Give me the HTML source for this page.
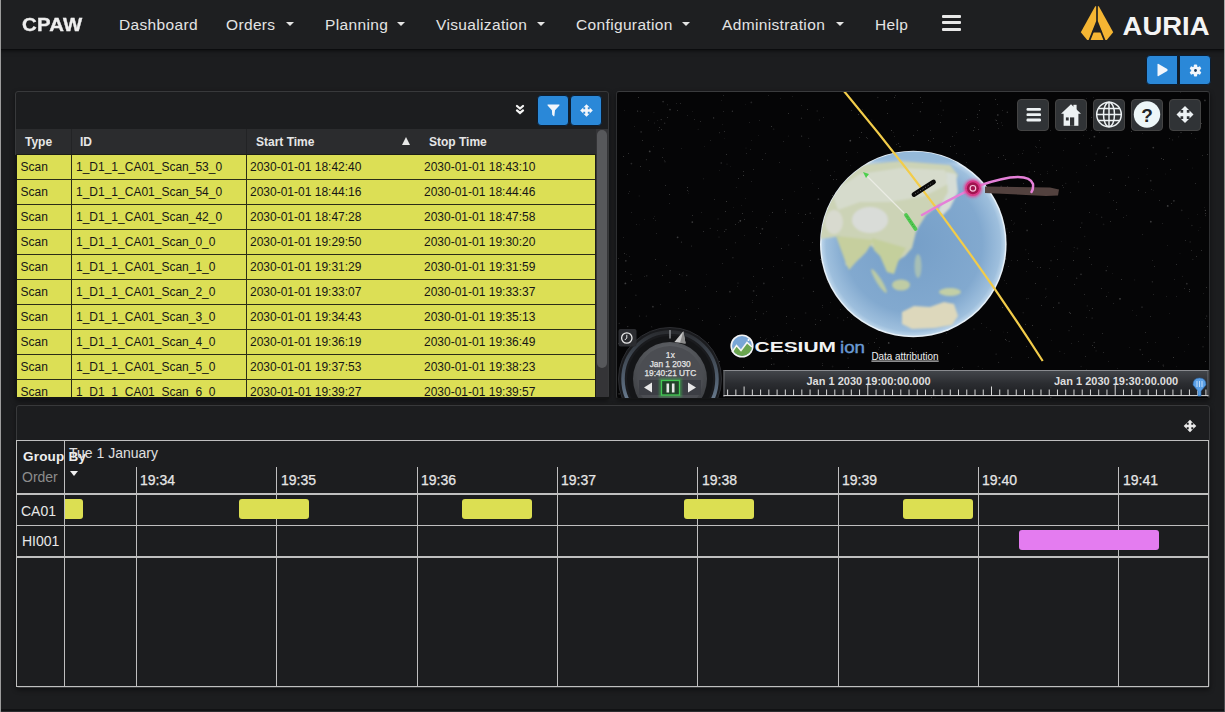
<!DOCTYPE html>
<html><head><meta charset="utf-8">
<style>
*{box-sizing:border-box;margin:0;padding:0}
html,body{width:1225px;height:712px;overflow:hidden;background:#1c1d1f;font-family:"Liberation Sans",sans-serif;}
body{position:relative}
.a{position:absolute}
.nav{left:0;top:0;width:1225px;height:50px;background:#1e1f21;border-bottom:1px solid #0b0c0e;box-shadow:0 1px 4px rgba(0,0,0,.55)}
.ni{position:absolute;top:15.5px;font-size:15.5px;letter-spacing:0.35px;line-height:17px;color:#e4e4e4;white-space:nowrap}
.caret{position:absolute;top:22px;width:0;height:0;border-left:4px solid transparent;border-right:4px solid transparent;border-top:4px solid #e4e4e4}
.bar{position:absolute;left:942px;width:19px;height:3px;background:#e8e8e8;border-radius:1px}
.bbtn{position:absolute;background:#2a88d8;border:1px solid #0b1e33}
.panel{position:absolute;border:1px solid #38393b;border-radius:3px;background:#1c1d1f;box-shadow:0 2px 5px rgba(0,0,0,.45)}
/* table */
.th{position:absolute;top:129px;height:25px;background:#2b2c2e}
.tht{position:absolute;top:135px;font-size:12px;line-height:14px;font-weight:bold;color:#e6e6e6;white-space:nowrap}
.row{position:absolute;left:16px;width:579px;height:25px;background:#dcdf55;border-bottom:1px solid #2c2c18}
.c{position:absolute;top:5px;font-size:12px;line-height:14px;color:#161616;white-space:nowrap}
.vl{position:absolute;top:0;width:1px;height:25px;background:#2c2c18}
/* vis */
.vline{position:absolute;background:#bfbfbf}
.tl{position:absolute;font-size:14px;line-height:16px;color:#e6e6e6;-webkit-text-stroke:0.25px #e6e6e6}
.item{position:absolute;height:20px;background:#dcdf52;border-radius:3px}
</style></head><body>
<div class="a" style="left:0;top:0;width:1px;height:712px;background:#9c9c9c;z-index:9"></div>
<div class="a" style="left:1224px;top:0;width:1px;height:712px;background:linear-gradient(#a8a8a8,#6a6a60 45%,#4a4b4e);z-index:9"></div>
<div class="a" style="left:0;top:709px;width:1225px;height:1.5px;background:#111214;z-index:8"></div>
<div class="a" style="left:0;top:710.5px;width:1225px;height:1.5px;background:#2c2d30;z-index:8"></div>

<!-- NAVBAR -->
<div class="a nav">
  <div class="ni" style="left:22px;top:15px;font-size:18.5px;letter-spacing:0.2px;line-height:20px;font-weight:bold;color:#eeeeee;transform:scaleX(1.10);transform-origin:0 0;-webkit-text-stroke:0.35px #eeeeee">CPAW</div>
  <div class="ni" style="left:119px">Dashboard</div>
  <div class="ni" style="left:226px">Orders</div><div class="caret" style="left:286px"></div>
  <div class="ni" style="left:325px">Planning</div><div class="caret" style="left:397px"></div>
  <div class="ni" style="left:436px">Visualization</div><div class="caret" style="left:537px"></div>
  <div class="ni" style="left:576px">Configuration</div><div class="caret" style="left:682px"></div>
  <div class="ni" style="left:722px">Administration</div><div class="caret" style="left:836px"></div>
  <div class="ni" style="left:875px">Help</div>
  <div class="bar" style="top:15px"></div><div class="bar" style="top:21px"></div><div class="bar" style="top:28px"></div>

  <svg class="a" style="left:1070px;top:0" width="150" height="48" viewBox="0 0 150 48">
    <polygon points="25.2,6.3 28.8,6.3 43.2,32.2 36.8,40 17.2,40 10.8,32.2" fill="#f4b533"/>
    <path d="M27,5 L27,23.5" stroke="#1e1f21" stroke-width="1.7"/>
    <path d="M27,21.5 L19.2,41 M27,21.5 L34.8,41" stroke="#1e1f21" stroke-width="1.9"/>
    <polygon points="27,23 21.8,32.4 32.2,32.4" fill="#1e1f21"/>
    <text x="52.6" y="34.6" font-family="Liberation Sans" font-weight="bold" font-size="25" fill="#f4f4f4" textLength="87" lengthAdjust="spacingAndGlyphs">AURIA</text>
  </svg>
</div>

<!-- top-right buttons -->
<div class="bbtn" style="left:1146px;top:55px;width:32px;height:30px;border-radius:4px 0 0 4px">
  <svg class="a" style="left:9px;top:7px" width="13" height="14" viewBox="0 0 13 14"><path d="M1.5,1.5 Q1.5,0.3 2.6,0.9 L11.2,6.1 Q12.2,7 11.2,7.9 L2.6,13.1 Q1.5,13.7 1.5,12.5 Z" fill="#f2f6fb"/></svg>
</div>
<div class="bbtn" style="left:1179px;top:55px;width:32px;height:30px;border-radius:0 4px 4px 0">
  <svg class="a" style="left:9px;top:8px" width="13" height="13" viewBox="-6.5 -6.5 13 13"><g fill="#f2f6fb"><circle r="4.3"/><g id="t"><rect x="-1.6" y="-6" width="3.2" height="12" rx="0.8"/></g><use href="#t" transform="rotate(60)"/><use href="#t" transform="rotate(120)"/></g><circle r="1.4" fill="#1a3a5a"/></svg>
</div>


<!-- PANEL 1 : table -->
<div class="panel" style="left:15px;top:91px;width:594px;height:308px"></div>
<svg class="a" style="left:515px;top:104px" width="10" height="11" viewBox="0 0 10 11"><path d="M2,2 L5,4.6 L8,2 M2,6.4 L5,9 L8,6.4" fill="none" stroke="#f4f4f4" stroke-width="2.3" stroke-linecap="round" stroke-linejoin="miter"/></svg>
<div class="bbtn" style="left:537px;top:95px;width:32px;height:31px;border-radius:4px">
  <svg class="a" style="left:9px;top:8px" width="13" height="13" viewBox="0 0 13 13"><path d="M0.8,0.6 L12.2,0.6 Q12.8,0.8 12.4,1.4 L8,6.2 L7.4,12 Q7.2,12.6 6.6,12.2 L5.2,10.8 L4.9,6.2 L0.6,1.4 Q0.2,0.8 0.8,0.6 Z" fill="#f2f6fb"/></svg>
</div>
<div class="bbtn" style="left:570px;top:95px;width:32px;height:31px;border-radius:4px">
  <svg class="a" style="left:9px;top:8px" width="13" height="13" viewBox="-6.5 -6.5 13 13"><g fill="#f2f6fb"><path d="M0,-6.3 L3,-3.2 L1.3,-3.2 L1.3,-1.3 L3.2,-1.3 L3.2,-3 L6.3,0 L3.2,3 L3.2,1.3 L1.3,1.3 L1.3,3.2 L3,3.2 L0,6.3 L-3,3.2 L-1.3,3.2 L-1.3,1.3 L-3.2,1.3 L-3.2,3 L-6.3,0 L-3.2,-3 L-3.2,-1.3 L-1.3,-1.3 L-1.3,-3.2 L-3,-3.2 Z"/></g></svg>
</div>
<div class="th" style="left:16px;width:55px"></div>
<div class="th" style="left:72px;width:174px"></div>
<div class="th" style="left:247px;width:349px"></div>
<div class="a" style="left:71px;top:129px;width:1px;height:25px;background:#222325"></div>
<div class="a" style="left:246px;top:129px;width:1px;height:25px;background:#222325"></div>
<div class="tht" style="left:25px">Type</div>
<div class="tht" style="left:80px">ID</div>
<div class="tht" style="left:256px">Start Time</div>
<div class="a" style="left:402px;top:137px;width:0;height:0;border-left:4.5px solid transparent;border-right:4.5px solid transparent;border-bottom:8.5px solid #e8e8e8"></div>
<div class="tht" style="left:429px">Stop Time</div>
<div class="a" style="left:16px;top:154px;width:580px;height:1px;background:#1d1e16"></div>
<div class="a" style="left:17px;top:155px;width:579px;height:242px;overflow:hidden">
<div class="row" style="left:0;top:0px"><div class="vl" style="left:54px"></div><div class="vl" style="left:229px"></div><div class="c" style="left:3.5px">Scan</div><div class="c" style="left:59px">1_D1_1_CA01_Scan_53_0</div><div class="c" style="left:233px">2030-01-01 18:42:40</div><div class="c" style="left:407px">2030-01-01 18:43:10</div></div>
<div class="row" style="left:0;top:25px"><div class="vl" style="left:54px"></div><div class="vl" style="left:229px"></div><div class="c" style="left:3.5px">Scan</div><div class="c" style="left:59px">1_D1_1_CA01_Scan_54_0</div><div class="c" style="left:233px">2030-01-01 18:44:16</div><div class="c" style="left:407px">2030-01-01 18:44:46</div></div>
<div class="row" style="left:0;top:50px"><div class="vl" style="left:54px"></div><div class="vl" style="left:229px"></div><div class="c" style="left:3.5px">Scan</div><div class="c" style="left:59px">1_D1_1_CA01_Scan_42_0</div><div class="c" style="left:233px">2030-01-01 18:47:28</div><div class="c" style="left:407px">2030-01-01 18:47:58</div></div>
<div class="row" style="left:0;top:75px"><div class="vl" style="left:54px"></div><div class="vl" style="left:229px"></div><div class="c" style="left:3.5px">Scan</div><div class="c" style="left:59px">1_D1_1_CA01_Scan_0_0</div><div class="c" style="left:233px">2030-01-01 19:29:50</div><div class="c" style="left:407px">2030-01-01 19:30:20</div></div>
<div class="row" style="left:0;top:100px"><div class="vl" style="left:54px"></div><div class="vl" style="left:229px"></div><div class="c" style="left:3.5px">Scan</div><div class="c" style="left:59px">1_D1_1_CA01_Scan_1_0</div><div class="c" style="left:233px">2030-01-01 19:31:29</div><div class="c" style="left:407px">2030-01-01 19:31:59</div></div>
<div class="row" style="left:0;top:125px"><div class="vl" style="left:54px"></div><div class="vl" style="left:229px"></div><div class="c" style="left:3.5px">Scan</div><div class="c" style="left:59px">1_D1_1_CA01_Scan_2_0</div><div class="c" style="left:233px">2030-01-01 19:33:07</div><div class="c" style="left:407px">2030-01-01 19:33:37</div></div>
<div class="row" style="left:0;top:150px"><div class="vl" style="left:54px"></div><div class="vl" style="left:229px"></div><div class="c" style="left:3.5px">Scan</div><div class="c" style="left:59px">1_D1_1_CA01_Scan_3_0</div><div class="c" style="left:233px">2030-01-01 19:34:43</div><div class="c" style="left:407px">2030-01-01 19:35:13</div></div>
<div class="row" style="left:0;top:175px"><div class="vl" style="left:54px"></div><div class="vl" style="left:229px"></div><div class="c" style="left:3.5px">Scan</div><div class="c" style="left:59px">1_D1_1_CA01_Scan_4_0</div><div class="c" style="left:233px">2030-01-01 19:36:19</div><div class="c" style="left:407px">2030-01-01 19:36:49</div></div>
<div class="row" style="left:0;top:200px"><div class="vl" style="left:54px"></div><div class="vl" style="left:229px"></div><div class="c" style="left:3.5px">Scan</div><div class="c" style="left:59px">1_D1_1_CA01_Scan_5_0</div><div class="c" style="left:233px">2030-01-01 19:37:53</div><div class="c" style="left:407px">2030-01-01 19:38:23</div></div>
<div class="row" style="left:0;top:225px"><div class="vl" style="left:54px"></div><div class="vl" style="left:229px"></div><div class="c" style="left:3.5px">Scan</div><div class="c" style="left:59px">1_D1_1_CA01_Scan_6_0</div><div class="c" style="left:233px">2030-01-01 19:39:27</div><div class="c" style="left:407px">2030-01-01 19:39:57</div></div>
</div>
<div class="a" style="left:15px;top:155px;width:2px;height:244px;background:#141516"></div>
<div class="a" style="left:15px;top:397px;width:594px;height:2px;background:#141516"></div>
<div class="a" style="left:595px;top:155px;width:1px;height:242px;background:#1d1e16"></div>
<div class="a" style="left:596px;top:129px;width:12px;height:268px;background:#343437"></div>
<div class="a" style="left:597px;top:130px;width:10px;height:238px;background:#57585b;border-radius:5px"></div>

<!-- PANEL 2 : cesium -->
<div class="panel" style="left:616px;top:91px;width:594px;height:308px;background:#050506;overflow:hidden;border-color:#3a3b3d #2e2f31 #151617 #2e2f31">
<svg class="a" style="left:0;top:0" width="592" height="306" viewBox="617 92 592 306">
<defs>
 <radialGradient id="oc" cx="0.5" cy="0.5" r="0.5"><stop offset="0" stop-color="#769fc8"/><stop offset="0.75" stop-color="#82a9cf"/><stop offset="0.95" stop-color="#9ebfdd"/><stop offset="1" stop-color="#bcd5ea"/></radialGradient><filter id="bl" x="-10%" y="-10%" width="120%" height="120%"><feGaussianBlur stdDeviation="1.2"/></filter><filter id="gl" x="-50%" y="-50%" width="200%" height="200%"><feGaussianBlur stdDeviation="1.5"/></filter>
 <clipPath id="gc"><circle cx="913.3" cy="244" r="92.5"/></clipPath>
</defs>
<g><rect x="885" y="263" width="1" height="1" fill="#fff" fill-opacity="0.19"/><rect x="893" y="247" width="1" height="1" fill="#fff" fill-opacity="0.14"/><rect x="726" y="249" width="1" height="1" fill="#fff" fill-opacity="0.15"/><rect x="1086" y="121" width="1" height="1" fill="#fff" fill-opacity="0.10"/><rect x="671" y="340" width="1" height="1" fill="#fff" fill-opacity="0.16"/><rect x="642" y="393" width="1" height="1" fill="#fff" fill-opacity="0.20"/><rect x="1004" y="280" width="1" height="1" fill="#fff" fill-opacity="0.08"/><rect x="626" y="254" width="1" height="1" fill="#fff" fill-opacity="0.07"/><rect x="730" y="166" width="1" height="1" fill="#fff" fill-opacity="0.06"/><rect x="892" y="227" width="1" height="1" fill="#fff" fill-opacity="0.18"/><rect x="924" y="288" width="1" height="1" fill="#fff" fill-opacity="0.13"/><rect x="1009" y="232" width="1" height="1" fill="#fff" fill-opacity="0.10"/><rect x="1208" y="397" width="1" height="1" fill="#fff" fill-opacity="0.18"/><rect x="1036" y="188" width="1" height="1" fill="#fff" fill-opacity="0.09"/><rect x="788" y="113" width="1" height="1" fill="#fff" fill-opacity="0.17"/><rect x="854" y="351" width="1" height="1" fill="#fff" fill-opacity="0.11"/><rect x="1184" y="351" width="1" height="1" fill="#fff" fill-opacity="0.06"/><rect x="741" y="371" width="1" height="1" fill="#fff" fill-opacity="0.13"/><rect x="1197" y="214" width="1" height="1" fill="#fff" fill-opacity="0.07"/><rect x="990" y="330" width="1" height="1" fill="#fff" fill-opacity="0.10"/><rect x="669" y="194" width="1" height="1" fill="#fff" fill-opacity="0.19"/><rect x="1066" y="128" width="1" height="1" fill="#fff" fill-opacity="0.09"/><rect x="677" y="110" width="1" height="1" fill="#fff" fill-opacity="0.17"/><rect x="722" y="263" width="1" height="1" fill="#fff" fill-opacity="0.12"/><rect x="730" y="316" width="1" height="1" fill="#fff" fill-opacity="0.08"/><rect x="998" y="128" width="1" height="1" fill="#fff" fill-opacity="0.12"/><rect x="743" y="175" width="1" height="1" fill="#fff" fill-opacity="0.20"/><rect x="1093" y="185" width="1" height="1" fill="#fff" fill-opacity="0.18"/><rect x="742" y="213" width="1" height="1" fill="#fff" fill-opacity="0.18"/><rect x="997" y="123" width="1" height="1" fill="#fff" fill-opacity="0.20"/><rect x="743" y="171" width="1" height="1" fill="#fff" fill-opacity="0.17"/><rect x="812" y="183" width="1" height="1" fill="#fff" fill-opacity="0.07"/><rect x="670" y="270" width="1" height="1" fill="#fff" fill-opacity="0.09"/><rect x="973" y="206" width="1" height="1" fill="#fff" fill-opacity="0.12"/><rect x="1185" y="240" width="1" height="1" fill="#fff" fill-opacity="0.14"/><rect x="1130" y="148" width="1" height="1" fill="#fff" fill-opacity="0.08"/><rect x="1155" y="342" width="1" height="1" fill="#fff" fill-opacity="0.09"/><rect x="729" y="318" width="1" height="1" fill="#fff" fill-opacity="0.19"/><rect x="733" y="383" width="1" height="1" fill="#fff" fill-opacity="0.18"/><rect x="974" y="221" width="1" height="1" fill="#fff" fill-opacity="0.07"/><rect x="640" y="387" width="1" height="1" fill="#fff" fill-opacity="0.09"/><rect x="1034" y="171" width="1" height="1" fill="#fff" fill-opacity="0.18"/><rect x="970" y="182" width="1" height="1" fill="#fff" fill-opacity="0.08"/><rect x="1043" y="113" width="1" height="1" fill="#fff" fill-opacity="0.09"/><rect x="948" y="353" width="1" height="1" fill="#fff" fill-opacity="0.15"/><rect x="783" y="373" width="1" height="1" fill="#fff" fill-opacity="0.09"/><rect x="627" y="174" width="1" height="1" fill="#fff" fill-opacity="0.12"/><rect x="653" y="146" width="1" height="1" fill="#fff" fill-opacity="0.11"/><rect x="956" y="132" width="1" height="1" fill="#fff" fill-opacity="0.11"/><rect x="1144" y="392" width="1" height="1" fill="#fff" fill-opacity="0.15"/><rect x="1026" y="271" width="1" height="1" fill="#fff" fill-opacity="0.08"/><rect x="638" y="97" width="1" height="1" fill="#fff" fill-opacity="0.19"/><rect x="1032" y="387" width="1" height="1" fill="#fff" fill-opacity="0.06"/><rect x="994" y="240" width="1" height="1" fill="#fff" fill-opacity="0.16"/><rect x="806" y="398" width="1" height="1" fill="#fff" fill-opacity="0.07"/><rect x="940" y="318" width="1" height="1" fill="#fff" fill-opacity="0.19"/><rect x="1053" y="307" width="1" height="1" fill="#fff" fill-opacity="0.17"/><rect x="1159" y="200" width="1" height="1" fill="#fff" fill-opacity="0.16"/><rect x="1150" y="359" width="1" height="1" fill="#fff" fill-opacity="0.12"/><rect x="1085" y="356" width="1" height="1" fill="#fff" fill-opacity="0.14"/><rect x="987" y="209" width="1" height="1" fill="#fff" fill-opacity="0.14"/><rect x="977" y="117" width="1" height="1" fill="#fff" fill-opacity="0.15"/><rect x="1205" y="361" width="1" height="1" fill="#fff" fill-opacity="0.16"/><rect x="847" y="317" width="1" height="1" fill="#fff" fill-opacity="0.14"/><rect x="878" y="349" width="1" height="1" fill="#fff" fill-opacity="0.07"/><rect x="1061" y="101" width="1" height="1" fill="#fff" fill-opacity="0.14"/><rect x="902" y="162" width="1" height="1" fill="#fff" fill-opacity="0.16"/><rect x="911" y="280" width="1" height="1" fill="#fff" fill-opacity="0.19"/><rect x="768" y="95" width="1" height="1" fill="#fff" fill-opacity="0.10"/><rect x="1018" y="154" width="1" height="1" fill="#fff" fill-opacity="0.08"/><rect x="1153" y="294" width="1" height="1" fill="#fff" fill-opacity="0.12"/><rect x="1145" y="192" width="1" height="1" fill="#fff" fill-opacity="0.15"/><rect x="735" y="224" width="1" height="1" fill="#fff" fill-opacity="0.17"/><rect x="1158" y="361" width="1" height="1" fill="#fff" fill-opacity="0.11"/><rect x="962" y="189" width="1" height="1" fill="#fff" fill-opacity="0.08"/><rect x="911" y="348" width="1" height="1" fill="#fff" fill-opacity="0.18"/><rect x="1038" y="383" width="1" height="1" fill="#fff" fill-opacity="0.10"/><rect x="717" y="230" width="1" height="1" fill="#fff" fill-opacity="0.10"/><rect x="744" y="219" width="1" height="1" fill="#fff" fill-opacity="0.15"/><rect x="909" y="189" width="1" height="1" fill="#fff" fill-opacity="0.18"/><rect x="1198" y="230" width="1" height="1" fill="#fff" fill-opacity="0.07"/><rect x="636" y="359" width="1" height="1" fill="#fff" fill-opacity="0.07"/><rect x="1037" y="267" width="1" height="1" fill="#fff" fill-opacity="0.10"/><rect x="1086" y="98" width="1" height="1" fill="#fff" fill-opacity="0.08"/><rect x="886" y="100" width="1" height="1" fill="#fff" fill-opacity="0.18"/><rect x="758" y="135" width="1" height="1" fill="#fff" fill-opacity="0.07"/><rect x="989" y="229" width="1" height="1" fill="#fff" fill-opacity="0.15"/><rect x="1005" y="339" width="1" height="1" fill="#fff" fill-opacity="0.19"/><rect x="1022" y="153" width="1" height="1" fill="#fff" fill-opacity="0.13"/><rect x="723" y="95" width="1" height="1" fill="#fff" fill-opacity="0.13"/><rect x="1040" y="147" width="1" height="1" fill="#fff" fill-opacity="0.10"/><rect x="822" y="305" width="1" height="1" fill="#fff" fill-opacity="0.13"/><rect x="981" y="323" width="1" height="1" fill="#fff" fill-opacity="0.12"/><rect x="1086" y="369" width="1" height="1" fill="#fff" fill-opacity="0.07"/><rect x="1169" y="313" width="1" height="1" fill="#fff" fill-opacity="0.08"/><rect x="885" y="283" width="1" height="1" fill="#fff" fill-opacity="0.19"/><rect x="840" y="266" width="1" height="1" fill="#fff" fill-opacity="0.18"/><rect x="1089" y="381" width="1" height="1" fill="#fff" fill-opacity="0.12"/><rect x="1003" y="155" width="1" height="1" fill="#fff" fill-opacity="0.16"/><rect x="1101" y="288" width="1" height="1" fill="#fff" fill-opacity="0.16"/><rect x="743" y="367" width="1" height="1" fill="#fff" fill-opacity="0.20"/><rect x="1196" y="256" width="1" height="1" fill="#fff" fill-opacity="0.17"/><rect x="807" y="370" width="1" height="1" fill="#fff" fill-opacity="0.18"/><rect x="823" y="117" width="1" height="1" fill="#fff" fill-opacity="0.12"/><rect x="943" y="327" width="1" height="1" fill="#fff" fill-opacity="0.13"/><rect x="634" y="340" width="1" height="1" fill="#fff" fill-opacity="0.07"/><rect x="1091" y="145" width="1" height="1" fill="#fff" fill-opacity="0.11"/><rect x="1083" y="135" width="1" height="1" fill="#fff" fill-opacity="0.08"/><rect x="923" y="313" width="1" height="1" fill="#fff" fill-opacity="0.18"/><rect x="1025" y="381" width="1" height="1" fill="#fff" fill-opacity="0.13"/><rect x="1179" y="118" width="1" height="1" fill="#fff" fill-opacity="0.09"/><rect x="929" y="181" width="1" height="1" fill="#fff" fill-opacity="0.16"/><rect x="995" y="252" width="1" height="1" fill="#fff" fill-opacity="0.18"/><rect x="949" y="187" width="1" height="1" fill="#fff" fill-opacity="0.11"/><rect x="1117" y="368" width="1" height="1" fill="#fff" fill-opacity="0.09"/><rect x="1121" y="388" width="1" height="1" fill="#fff" fill-opacity="0.13"/><rect x="956" y="153" width="1" height="1" fill="#fff" fill-opacity="0.14"/><rect x="915" y="277" width="1" height="1" fill="#fff" fill-opacity="0.06"/><rect x="1191" y="250" width="1" height="1" fill="#fff" fill-opacity="0.12"/><rect x="1091" y="264" width="1" height="1" fill="#fff" fill-opacity="0.13"/><rect x="1026" y="112" width="1" height="1" fill="#fff" fill-opacity="0.14"/><rect x="862" y="385" width="1" height="1" fill="#fff" fill-opacity="0.19"/><rect x="776" y="237" width="1" height="1" fill="#fff" fill-opacity="0.08"/><rect x="874" y="342" width="1" height="1" fill="#fff" fill-opacity="0.19"/><rect x="899" y="189" width="1" height="1" fill="#fff" fill-opacity="0.09"/><rect x="983" y="375" width="1" height="1" fill="#fff" fill-opacity="0.08"/><rect x="1078" y="99" width="1" height="1" fill="#fff" fill-opacity="0.09"/><rect x="752" y="302" width="1" height="1" fill="#fff" fill-opacity="0.11"/><rect x="827" y="282" width="1" height="1" fill="#fff" fill-opacity="0.07"/><rect x="1050" y="130" width="1" height="1" fill="#fff" fill-opacity="0.13"/><rect x="765" y="153" width="1" height="1" fill="#fff" fill-opacity="0.13"/><rect x="876" y="207" width="1" height="1" fill="#fff" fill-opacity="0.12"/><rect x="930" y="141" width="1" height="1" fill="#fff" fill-opacity="0.09"/><rect x="991" y="287" width="1" height="1" fill="#fff" fill-opacity="0.13"/><rect x="1121" y="279" width="1" height="1" fill="#fff" fill-opacity="0.18"/><rect x="755" y="319" width="1" height="1" fill="#fff" fill-opacity="0.17"/><rect x="1151" y="189" width="1" height="1" fill="#fff" fill-opacity="0.10"/><rect x="1163" y="159" width="1" height="1" fill="#fff" fill-opacity="0.20"/><rect x="1142" y="133" width="1" height="1" fill="#fff" fill-opacity="0.09"/><rect x="1047" y="171" width="1" height="1" fill="#fff" fill-opacity="0.07"/><rect x="1110" y="221" width="1" height="1" fill="#fff" fill-opacity="0.17"/><rect x="692" y="215" width="1" height="1" fill="#fff" fill-opacity="0.16"/><rect x="628" y="153" width="1" height="1" fill="#fff" fill-opacity="0.16"/><rect x="1157" y="388" width="1" height="1" fill="#fff" fill-opacity="0.08"/><rect x="916" y="324" width="1" height="1" fill="#fff" fill-opacity="0.13"/><rect x="1023" y="150" width="1" height="1" fill="#fff" fill-opacity="0.07"/><rect x="680" y="103" width="1" height="1" fill="#fff" fill-opacity="0.14"/><rect x="922" y="266" width="1" height="1" fill="#fff" fill-opacity="0.08"/><rect x="726" y="154" width="1" height="1" fill="#fff" fill-opacity="0.18"/><rect x="1203" y="376" width="1" height="1" fill="#fff" fill-opacity="0.07"/><rect x="654" y="383" width="1" height="1" fill="#fff" fill-opacity="0.12"/><rect x="1070" y="192" width="1" height="1" fill="#fff" fill-opacity="0.13"/><rect x="922" y="224" width="1" height="1" fill="#fff" fill-opacity="0.14"/><rect x="625" y="307" width="1" height="1" fill="#fff" fill-opacity="0.18"/><rect x="724" y="231" width="1" height="1" fill="#fff" fill-opacity="0.16"/><rect x="857" y="152" width="1" height="1" fill="#fff" fill-opacity="0.08"/><rect x="920" y="97" width="1" height="1" fill="#fff" fill-opacity="0.19"/><rect x="1092" y="308" width="1" height="1" fill="#fff" fill-opacity="0.18"/><rect x="990" y="216" width="1" height="1" fill="#fff" fill-opacity="0.14"/><rect x="916" y="393" width="1" height="1" fill="#fff" fill-opacity="0.17"/><rect x="770" y="371" width="1" height="1" fill="#fff" fill-opacity="0.16"/><rect x="1078" y="341" width="1" height="1" fill="#fff" fill-opacity="0.12"/><rect x="1148" y="361" width="1" height="1" fill="#fff" fill-opacity="0.16"/><rect x="1071" y="326" width="1" height="1" fill="#fff" fill-opacity="0.12"/><rect x="1045" y="114" width="1" height="1" fill="#fff" fill-opacity="0.11"/><rect x="895" y="95" width="1" height="1" fill="#fff" fill-opacity="0.11"/><rect x="995" y="283" width="1" height="1" fill="#fff" fill-opacity="0.09"/><rect x="1176" y="296" width="1" height="1" fill="#fff" fill-opacity="0.11"/><rect x="1008" y="266" width="1" height="1" fill="#fff" fill-opacity="0.13"/><rect x="848" y="398" width="1" height="1" fill="#fff" fill-opacity="0.15"/><rect x="1032" y="325" width="1" height="1" fill="#fff" fill-opacity="0.20"/><rect x="631" y="280" width="1" height="1" fill="#fff" fill-opacity="0.16"/><rect x="769" y="215" width="1" height="1" fill="#fff" fill-opacity="0.07"/><rect x="733" y="207" width="1" height="1" fill="#fff" fill-opacity="0.07"/><rect x="766" y="369" width="1" height="1" fill="#fff" fill-opacity="0.14"/><rect x="918" y="388" width="1" height="1" fill="#fff" fill-opacity="0.14"/><rect x="1206" y="287" width="1" height="1" fill="#fff" fill-opacity="0.17"/><rect x="662" y="275" width="1" height="1" fill="#fff" fill-opacity="0.17"/><rect x="644" y="377" width="1" height="1" fill="#fff" fill-opacity="0.08"/><rect x="896" y="144" width="1" height="1" fill="#fff" fill-opacity="0.13"/><rect x="979" y="110" width="1" height="1" fill="#fff" fill-opacity="0.19"/><rect x="866" y="253" width="1" height="1" fill="#fff" fill-opacity="0.14"/><rect x="833" y="179" width="1" height="1" fill="#fff" fill-opacity="0.15"/><rect x="949" y="179" width="1" height="1" fill="#fff" fill-opacity="0.16"/><rect x="792" y="96" width="1" height="1" fill="#fff" fill-opacity="0.09"/><rect x="642" y="140" width="1" height="1" fill="#fff" fill-opacity="0.17"/><rect x="848" y="367" width="1" height="1" fill="#fff" fill-opacity="0.16"/><rect x="647" y="395" width="1" height="1" fill="#fff" fill-opacity="0.19"/><rect x="661" y="369" width="1" height="1" fill="#fff" fill-opacity="0.12"/><rect x="900" y="390" width="1" height="1" fill="#fff" fill-opacity="0.09"/><rect x="927" y="379" width="1" height="1" fill="#fff" fill-opacity="0.16"/><rect x="894" y="392" width="1" height="1" fill="#fff" fill-opacity="0.17"/><rect x="974" y="127" width="1" height="1" fill="#fff" fill-opacity="0.15"/><rect x="887" y="154" width="1" height="1" fill="#fff" fill-opacity="0.07"/><rect x="930" y="130" width="1" height="1" fill="#fff" fill-opacity="0.12"/><rect x="1012" y="231" width="1" height="1" fill="#fff" fill-opacity="0.10"/><rect x="962" y="220" width="1" height="1" fill="#fff" fill-opacity="0.17"/><rect x="931" y="397" width="1" height="1" fill="#fff" fill-opacity="0.19"/><rect x="1052" y="165" width="1" height="1" fill="#fff" fill-opacity="0.08"/><rect x="1145" y="332" width="1" height="1" fill="#fff" fill-opacity="0.15"/><rect x="830" y="175" width="1" height="1" fill="#fff" fill-opacity="0.16"/><rect x="951" y="273" width="1" height="1" fill="#fff" fill-opacity="0.15"/><rect x="1063" y="150" width="1" height="1" fill="#fff" fill-opacity="0.09"/><rect x="1197" y="372" width="1" height="1" fill="#fff" fill-opacity="0.18"/><rect x="640" y="111" width="1" height="1" fill="#fff" fill-opacity="0.10"/><rect x="869" y="283" width="1" height="1" fill="#fff" fill-opacity="0.07"/><rect x="938" y="114" width="1" height="1" fill="#fff" fill-opacity="0.07"/><rect x="1017" y="260" width="1" height="1" fill="#fff" fill-opacity="0.15"/><rect x="838" y="238" width="1" height="1" fill="#fff" fill-opacity="0.09"/><rect x="820" y="320" width="1" height="1" fill="#fff" fill-opacity="0.18"/><rect x="661" y="129" width="1" height="1" fill="#fff" fill-opacity="0.17"/><rect x="986" y="327" width="1" height="1" fill="#fff" fill-opacity="0.09"/><rect x="868" y="171" width="1" height="1" fill="#fff" fill-opacity="0.17"/><rect x="835" y="292" width="1" height="1" fill="#fff" fill-opacity="0.20"/><rect x="810" y="260" width="1" height="1" fill="#fff" fill-opacity="0.16"/><rect x="1162" y="223" width="1" height="1" fill="#fff" fill-opacity="0.11"/><rect x="674" y="360" width="1" height="1" fill="#fff" fill-opacity="0.07"/><rect x="666" y="265" width="1" height="1" fill="#fff" fill-opacity="0.13"/><rect x="1023" y="183" width="1" height="1" fill="#fff" fill-opacity="0.17"/><rect x="662" y="157" width="1" height="1" fill="#fff" fill-opacity="0.15"/><rect x="665" y="185" width="1" height="1" fill="#fff" fill-opacity="0.16"/><rect x="1028" y="179" width="1" height="1" fill="#fff" fill-opacity="0.08"/><rect x="829" y="314" width="1" height="1" fill="#fff" fill-opacity="0.11"/><rect x="686" y="309" width="1" height="1" fill="#fff" fill-opacity="0.14"/><rect x="1161" y="380" width="1" height="1" fill="#fff" fill-opacity="0.19"/><rect x="876" y="338" width="1" height="1" fill="#fff" fill-opacity="0.10"/><rect x="805" y="214" width="1" height="1" fill="#fff" fill-opacity="0.19"/><rect x="1147" y="168" width="1" height="1" fill="#fff" fill-opacity="0.11"/><rect x="833" y="203" width="1" height="1" fill="#fff" fill-opacity="0.12"/><rect x="846" y="152" width="1" height="1" fill="#fff" fill-opacity="0.14"/><rect x="1089" y="257" width="1" height="1" fill="#fff" fill-opacity="0.18"/><rect x="950" y="146" width="1" height="1" fill="#fff" fill-opacity="0.17"/><rect x="1138" y="178" width="1" height="1" fill="#fff" fill-opacity="0.06"/><rect x="922" y="259" width="1" height="1" fill="#fff" fill-opacity="0.14"/><rect x="1189" y="291" width="1" height="1" fill="#fff" fill-opacity="0.17"/><rect x="655" y="259" width="1" height="1" fill="#fff" fill-opacity="0.17"/><rect x="667" y="117" width="1" height="1" fill="#fff" fill-opacity="0.16"/><rect x="1149" y="118" width="1" height="1" fill="#fff" fill-opacity="0.15"/><rect x="702" y="320" width="1" height="1" fill="#fff" fill-opacity="0.15"/><rect x="762" y="159" width="1" height="1" fill="#fff" fill-opacity="0.17"/><rect x="926" y="326" width="1" height="1" fill="#fff" fill-opacity="0.12"/><rect x="817" y="388" width="1" height="1" fill="#fff" fill-opacity="0.15"/><rect x="909" y="256" width="1" height="1" fill="#fff" fill-opacity="0.16"/><rect x="1036" y="372" width="1" height="1" fill="#fff" fill-opacity="0.12"/><rect x="1106" y="296" width="1" height="1" fill="#fff" fill-opacity="0.18"/><rect x="1094" y="347" width="1" height="1" fill="#fff" fill-opacity="0.18"/><rect x="1184" y="288" width="1" height="1" fill="#fff" fill-opacity="0.13"/><rect x="1037" y="337" width="1" height="1" fill="#fff" fill-opacity="0.12"/><rect x="866" y="137" width="1" height="1" fill="#fff" fill-opacity="0.16"/><rect x="1204" y="207" width="1" height="1" fill="#fff" fill-opacity="0.08"/><rect x="738" y="222" width="1" height="1" fill="#fff" fill-opacity="0.10"/><rect x="1191" y="110" width="1" height="1" fill="#fff" fill-opacity="0.10"/><rect x="685" y="290" width="1" height="1" fill="#fff" fill-opacity="0.17"/><rect x="723" y="111" width="1" height="1" fill="#fff" fill-opacity="0.12"/><rect x="963" y="370" width="1" height="1" fill="#fff" fill-opacity="0.07"/><rect x="681" y="148" width="1" height="1" fill="#fff" fill-opacity="0.09"/><rect x="756" y="311" width="1" height="1" fill="#fff" fill-opacity="0.14"/><rect x="750" y="149" width="1" height="1" fill="#fff" fill-opacity="0.10"/><rect x="719" y="324" width="1" height="1" fill="#fff" fill-opacity="0.10"/><rect x="942" y="342" width="1" height="1" fill="#fff" fill-opacity="0.13"/><rect x="771" y="364" width="1" height="1" fill="#fff" fill-opacity="0.19"/><rect x="820" y="259" width="1" height="1" fill="#fff" fill-opacity="0.19"/><rect x="903" y="160" width="1" height="1" fill="#fff" fill-opacity="0.07"/><rect x="1178" y="337" width="1" height="1" fill="#fff" fill-opacity="0.11"/><rect x="929" y="250" width="1" height="1" fill="#fff" fill-opacity="0.10"/><rect x="1203" y="293" width="1" height="1" fill="#fff" fill-opacity="0.09"/><rect x="623" y="237" width="1" height="1" fill="#fff" fill-opacity="0.11"/><rect x="1089" y="310" width="1" height="1" fill="#fff" fill-opacity="0.14"/><rect x="710" y="140" width="1" height="1" fill="#fff" fill-opacity="0.11"/><rect x="771" y="358" width="1" height="1" fill="#fff" fill-opacity="0.13"/><rect x="994" y="396" width="1" height="1" fill="#fff" fill-opacity="0.10"/><rect x="933" y="138" width="1" height="1" fill="#fff" fill-opacity="0.17"/><rect x="618" y="343" width="1" height="1" fill="#fff" fill-opacity="0.18"/><rect x="1104" y="117" width="1" height="1" fill="#fff" fill-opacity="0.10"/><rect x="1041" y="122" width="1" height="1" fill="#fff" fill-opacity="0.13"/><rect x="894" y="384" width="1" height="1" fill="#fff" fill-opacity="0.14"/><rect x="1125" y="185" width="1" height="1" fill="#fff" fill-opacity="0.17"/><rect x="864" y="373" width="1" height="1" fill="#fff" fill-opacity="0.07"/><rect x="1106" y="156" width="1" height="1" fill="#fff" fill-opacity="0.14"/><rect x="928" y="140" width="1" height="1" fill="#fff" fill-opacity="0.18"/><rect x="801" y="187" width="1" height="1" fill="#fff" fill-opacity="0.07"/><rect x="798" y="235" width="1" height="1" fill="#fff" fill-opacity="0.16"/><rect x="830" y="302" width="1" height="1" fill="#fff" fill-opacity="0.07"/><rect x="850" y="233" width="1" height="1" fill="#fff" fill-opacity="0.20"/><rect x="1108" y="292" width="1" height="1" fill="#fff" fill-opacity="0.06"/><rect x="840" y="309" width="1" height="1" fill="#fff" fill-opacity="0.09"/><rect x="951" y="232" width="1" height="1" fill="#fff" fill-opacity="0.06"/><rect x="1204" y="337" width="1" height="1" fill="#fff" fill-opacity="0.09"/><rect x="982" y="181" width="1" height="1" fill="#fff" fill-opacity="0.11"/><rect x="937" y="183" width="1" height="1" fill="#fff" fill-opacity="0.11"/><rect x="849" y="296" width="1" height="1" fill="#fff" fill-opacity="0.10"/><rect x="735" y="316" width="1" height="1" fill="#fff" fill-opacity="0.11"/><rect x="1176" y="264" width="1" height="1" fill="#fff" fill-opacity="0.16"/><rect x="813" y="345" width="1" height="1" fill="#fff" fill-opacity="0.07"/><rect x="700" y="121" width="1" height="1" fill="#fff" fill-opacity="0.15"/><rect x="1036" y="147" width="1" height="1" fill="#fff" fill-opacity="0.12"/><rect x="1112" y="273" width="1" height="1" fill="#fff" fill-opacity="0.07"/><rect x="751" y="140" width="1" height="1" fill="#fff" fill-opacity="0.08"/><rect x="858" y="114" width="1" height="1" fill="#fff" fill-opacity="0.19"/><rect x="870" y="249" width="1" height="1" fill="#fff" fill-opacity="0.15"/><rect x="1071" y="343" width="1" height="1" fill="#fff" fill-opacity="0.11"/><rect x="813" y="218" width="1" height="1" fill="#fff" fill-opacity="0.06"/><rect x="854" y="306" width="1" height="1" fill="#fff" fill-opacity="0.20"/><rect x="1084" y="294" width="1" height="1" fill="#fff" fill-opacity="0.15"/><rect x="628" y="193" width="1" height="1" fill="#fff" fill-opacity="0.11"/><rect x="1002" y="125" width="1" height="1" fill="#fff" fill-opacity="0.11"/><rect x="919" y="333" width="1" height="1" fill="#fff" fill-opacity="0.18"/><rect x="979" y="140" width="1" height="1" fill="#fff" fill-opacity="0.17"/><rect x="1152" y="260" width="1" height="1" fill="#fff" fill-opacity="0.11"/><rect x="913" y="135" width="1" height="1" fill="#fff" fill-opacity="0.16"/><rect x="1201" y="250" width="1" height="1" fill="#fff" fill-opacity="0.16"/><rect x="1112" y="152" width="1" height="1" fill="#fff" fill-opacity="0.19"/><rect x="988" y="153" width="1" height="1" fill="#fff" fill-opacity="0.07"/><rect x="762" y="268" width="1" height="1" fill="#fff" fill-opacity="0.16"/><rect x="812" y="376" width="1" height="1" fill="#fff" fill-opacity="0.11"/><rect x="891" y="130" width="1" height="1" fill="#fff" fill-opacity="0.20"/><rect x="697" y="369" width="1" height="1" fill="#fff" fill-opacity="0.14"/><rect x="949" y="263" width="1" height="1" fill="#fff" fill-opacity="0.10"/><rect x="1155" y="396" width="1" height="1" fill="#fff" fill-opacity="0.17"/><rect x="973" y="130" width="1" height="1" fill="#fff" fill-opacity="0.18"/><rect x="788" y="366" width="1" height="1" fill="#fff" fill-opacity="0.09"/><rect x="957" y="346" width="1" height="1" fill="#fff" fill-opacity="0.09"/><rect x="941" y="115" width="1" height="1" fill="#fff" fill-opacity="0.06"/><rect x="724" y="394" width="1" height="1" fill="#fff" fill-opacity="0.19"/><rect x="1007" y="186" width="1" height="1" fill="#fff" fill-opacity="0.15"/><rect x="1054" y="209" width="1" height="1" fill="#fff" fill-opacity="0.14"/><rect x="1093" y="97" width="1" height="1" fill="#fff" fill-opacity="0.09"/><rect x="894" y="136" width="1" height="1" fill="#fff" fill-opacity="0.11"/><rect x="954" y="145" width="1" height="1" fill="#fff" fill-opacity="0.13"/><rect x="773" y="266" width="1" height="1" fill="#fff" fill-opacity="0.11"/><rect x="997" y="104" width="1" height="1" fill="#fff" fill-opacity="0.15"/><rect x="703" y="386" width="1" height="1" fill="#fff" fill-opacity="0.14"/><rect x="895" y="218" width="1" height="1" fill="#fff" fill-opacity="0.15"/><rect x="1025" y="324" width="1" height="1" fill="#fff" fill-opacity="0.17"/><rect x="905" y="396" width="1" height="1" fill="#fff" fill-opacity="0.18"/><rect x="1123" y="217" width="1" height="1" fill="#fff" fill-opacity="0.12"/><rect x="952" y="369" width="1" height="1" fill="#fff" fill-opacity="0.13"/><rect x="928" y="224" width="1" height="1" fill="#fff" fill-opacity="0.19"/><rect x="807" y="109" width="1" height="1" fill="#fff" fill-opacity="0.16"/><rect x="1150" y="316" width="1" height="1" fill="#fff" fill-opacity="0.14"/><rect x="1062" y="185" width="1" height="1" fill="#fff" fill-opacity="0.14"/><rect x="658" y="130" width="1" height="1" fill="#fff" fill-opacity="0.12"/><rect x="915" y="213" width="1" height="1" fill="#fff" fill-opacity="0.07"/><rect x="1028" y="253" width="1" height="1" fill="#fff" fill-opacity="0.09"/><rect x="798" y="213" width="1" height="1" fill="#fff" fill-opacity="0.09"/><rect x="658" y="371" width="1" height="1" fill="#fff" fill-opacity="0.20"/><rect x="1011" y="357" width="1" height="1" fill="#fff" fill-opacity="0.12"/><rect x="1094" y="160" width="1" height="1" fill="#fff" fill-opacity="0.16"/><rect x="953" y="368" width="1" height="1" fill="#fff" fill-opacity="0.07"/><rect x="1086" y="130" width="1" height="1" fill="#fff" fill-opacity="0.14"/><rect x="1180" y="92" width="1" height="1" fill="#fff" fill-opacity="0.09"/><rect x="794" y="191" width="1" height="1" fill="#fff" fill-opacity="0.07"/><rect x="1147" y="342" width="1" height="1" fill="#fff" fill-opacity="0.12"/><rect x="828" y="271" width="1" height="1" fill="#fff" fill-opacity="0.07"/><rect x="635" y="367" width="1" height="1" fill="#fff" fill-opacity="0.10"/><rect x="912" y="378" width="1" height="1" fill="#fff" fill-opacity="0.20"/><rect x="897" y="155" width="1" height="1" fill="#fff" fill-opacity="0.10"/><rect x="1163" y="366" width="1" height="1" fill="#fff" fill-opacity="0.09"/><rect x="1113" y="200" width="1" height="1" fill="#fff" fill-opacity="0.13"/><rect x="719" y="361" width="1" height="1" fill="#fff" fill-opacity="0.20"/><rect x="737" y="286" width="1" height="1" fill="#fff" fill-opacity="0.09"/><rect x="1138" y="107" width="1" height="1" fill="#fff" fill-opacity="0.07"/><rect x="1047" y="188" width="1" height="1" fill="#fff" fill-opacity="0.19"/><rect x="1132" y="310" width="1" height="1" fill="#fff" fill-opacity="0.08"/><rect x="1029" y="379" width="1" height="1" fill="#fff" fill-opacity="0.12"/><rect x="664" y="160" width="1" height="1" fill="#fff" fill-opacity="0.10"/><rect x="1038" y="152" width="1" height="1" fill="#fff" fill-opacity="0.09"/><rect x="756" y="295" width="1" height="1" fill="#fff" fill-opacity="0.17"/><rect x="838" y="295" width="1" height="1" fill="#fff" fill-opacity="0.18"/><rect x="966" y="162" width="1" height="1" fill="#fff" fill-opacity="0.10"/><rect x="1166" y="296" width="1" height="1" fill="#fff" fill-opacity="0.10"/><rect x="996" y="120" width="1" height="1" fill="#fff" fill-opacity="0.20"/><rect x="878" y="254" width="1" height="1" fill="#fff" fill-opacity="0.13"/><rect x="644" y="276" width="1" height="1" fill="#fff" fill-opacity="0.10"/><rect x="766" y="338" width="1" height="1" fill="#fff" fill-opacity="0.07"/><rect x="786" y="323" width="1" height="1" fill="#fff" fill-opacity="0.09"/><rect x="782" y="260" width="1" height="1" fill="#fff" fill-opacity="0.09"/><rect x="1148" y="394" width="1" height="1" fill="#fff" fill-opacity="0.06"/><rect x="890" y="322" width="1" height="1" fill="#fff" fill-opacity="0.11"/><rect x="1167" y="245" width="1" height="1" fill="#fff" fill-opacity="0.09"/><rect x="946" y="289" width="1" height="1" fill="#fff" fill-opacity="0.11"/><rect x="1007" y="332" width="1" height="1" fill="#fff" fill-opacity="0.13"/><rect x="916" y="351" width="1" height="1" fill="#fff" fill-opacity="0.16"/><rect x="925" y="383" width="1" height="1" fill="#fff" fill-opacity="0.08"/><rect x="1079" y="143" width="1" height="1" fill="#fff" fill-opacity="0.15"/><rect x="756" y="227" width="1" height="1" fill="#fff" fill-opacity="0.17"/><rect x="1083" y="334" width="1" height="1" fill="#fff" fill-opacity="0.09"/><rect x="907" y="160" width="1" height="1" fill="#fff" fill-opacity="0.14"/><rect x="912" y="103" width="1" height="1" fill="#fff" fill-opacity="0.14"/><rect x="1040" y="267" width="1" height="1" fill="#fff" fill-opacity="0.18"/><rect x="724" y="138" width="1" height="1" fill="#fff" fill-opacity="0.06"/><rect x="911" y="225" width="1" height="1" fill="#fff" fill-opacity="0.12"/><rect x="773" y="336" width="1" height="1" fill="#fff" fill-opacity="0.07"/><rect x="1154" y="266" width="1" height="1" fill="#fff" fill-opacity="0.14"/><rect x="1086" y="165" width="1" height="1" fill="#fff" fill-opacity="0.08"/><rect x="801" y="105" width="1" height="1" fill="#fff" fill-opacity="0.10"/><rect x="985" y="253" width="1" height="1" fill="#fff" fill-opacity="0.10"/><rect x="966" y="119" width="1" height="1" fill="#fff" fill-opacity="0.17"/><rect x="719" y="170" width="1" height="1" fill="#fff" fill-opacity="0.08"/><rect x="1026" y="346" width="1" height="1" fill="#fff" fill-opacity="0.17"/><rect x="653" y="218" width="1" height="1" fill="#fff" fill-opacity="0.11"/><rect x="745" y="389" width="1" height="1" fill="#fff" fill-opacity="0.07"/><rect x="907" y="325" width="1" height="1" fill="#fff" fill-opacity="0.20"/><rect x="703" y="231" width="1" height="1" fill="#fff" fill-opacity="0.16"/><rect x="640" y="166" width="1" height="1" fill="#fff" fill-opacity="0.18"/><rect x="701" y="212" width="1" height="1" fill="#fff" fill-opacity="0.10"/><rect x="868" y="115" width="1" height="1" fill="#fff" fill-opacity="0.06"/><rect x="1207" y="326" width="1" height="1" fill="#fff" fill-opacity="0.16"/><rect x="753" y="169" width="1" height="1" fill="#fff" fill-opacity="0.14"/><rect x="760" y="233" width="1" height="1" fill="#fff" fill-opacity="0.19"/><rect x="832" y="195" width="1" height="1" fill="#fff" fill-opacity="0.20"/><rect x="979" y="104" width="1" height="1" fill="#fff" fill-opacity="0.12"/><rect x="1002" y="110" width="1" height="1" fill="#fff" fill-opacity="0.11"/><rect x="1028" y="357" width="1" height="1" fill="#fff" fill-opacity="0.14"/><rect x="1142" y="234" width="1" height="1" fill="#fff" fill-opacity="0.12"/><rect x="1116" y="209" width="1" height="1" fill="#fff" fill-opacity="0.17"/><rect x="745" y="198" width="1" height="1" fill="#fff" fill-opacity="0.09"/><rect x="942" y="142" width="1" height="1" fill="#fff" fill-opacity="0.09"/><rect x="744" y="235" width="1" height="1" fill="#fff" fill-opacity="0.10"/><rect x="882" y="396" width="1" height="1" fill="#fff" fill-opacity="0.16"/><rect x="1128" y="155" width="1" height="1" fill="#fff" fill-opacity="0.11"/><rect x="660" y="304" width="1" height="1" fill="#fff" fill-opacity="0.11"/><rect x="780" y="98" width="1" height="1" fill="#fff" fill-opacity="0.09"/><rect x="772" y="212" width="1" height="1" fill="#fff" fill-opacity="0.19"/><rect x="1040" y="174" width="1" height="1" fill="#fff" fill-opacity="0.11"/><rect x="708" y="379" width="1" height="1" fill="#fff" fill-opacity="0.11"/><rect x="1070" y="313" width="1" height="1" fill="#fff" fill-opacity="0.19"/><rect x="629" y="191" width="1" height="1" fill="#fff" fill-opacity="0.11"/><rect x="666" y="362" width="1" height="1" fill="#fff" fill-opacity="0.11"/><rect x="1073" y="251" width="1" height="1" fill="#fff" fill-opacity="0.07"/><rect x="850" y="165" width="1" height="1" fill="#fff" fill-opacity="0.07"/><rect x="706" y="274" width="1" height="1" fill="#fff" fill-opacity="0.06"/><rect x="802" y="222" width="1" height="1" fill="#fff" fill-opacity="0.14"/><rect x="698" y="308" width="1" height="1" fill="#fff" fill-opacity="0.10"/><rect x="1046" y="296" width="1" height="1" fill="#fff" fill-opacity="0.08"/><rect x="738" y="178" width="1" height="1" fill="#fff" fill-opacity="0.16"/><rect x="857" y="210" width="1" height="1" fill="#fff" fill-opacity="0.18"/><rect x="751" y="181" width="1" height="1" fill="#fff" fill-opacity="0.11"/><rect x="745" y="104" width="1" height="1" fill="#fff" fill-opacity="0.06"/><rect x="990" y="265" width="1" height="1" fill="#fff" fill-opacity="0.17"/><rect x="1195" y="183" width="1" height="1" fill="#fff" fill-opacity="0.15"/><rect x="1161" y="158" width="1" height="1" fill="#fff" fill-opacity="0.16"/><rect x="1012" y="384" width="1" height="1" fill="#fff" fill-opacity="0.18"/><rect x="756" y="286" width="1" height="1" fill="#fff" fill-opacity="0.07"/><rect x="870" y="212" width="1" height="1" fill="#fff" fill-opacity="0.07"/><rect x="844" y="192" width="1" height="1" fill="#fff" fill-opacity="0.13"/><rect x="783" y="141" width="1" height="1" fill="#fff" fill-opacity="0.12"/><rect x="898" y="143" width="1" height="1" fill="#fff" fill-opacity="0.15"/><rect x="759" y="120" width="1" height="1" fill="#fff" fill-opacity="0.11"/><rect x="867" y="138" width="1" height="1" fill="#fff" fill-opacity="0.14"/><rect x="1032" y="261" width="1" height="1" fill="#fff" fill-opacity="0.16"/><rect x="631" y="212" width="1" height="1" fill="#fff" fill-opacity="0.11"/><rect x="654" y="216" width="1" height="1" fill="#fff" fill-opacity="0.07"/><rect x="910" y="271" width="1" height="1" fill="#fff" fill-opacity="0.13"/><rect x="810" y="170" width="1" height="1" fill="#fff" fill-opacity="0.06"/><rect x="822" y="365" width="1" height="1" fill="#fff" fill-opacity="0.14"/><rect x="772" y="296" width="1" height="1" fill="#fff" fill-opacity="0.09"/><rect x="895" y="280" width="1" height="1" fill="#fff" fill-opacity="0.19"/><rect x="832" y="268" width="1" height="1" fill="#fff" fill-opacity="0.19"/><rect x="1074" y="284" width="1" height="1" fill="#fff" fill-opacity="0.15"/><rect x="860" y="219" width="1" height="1" fill="#fff" fill-opacity="0.10"/><rect x="1108" y="361" width="1" height="1" fill="#fff" fill-opacity="0.11"/><rect x="1155" y="104" width="1" height="1" fill="#fff" fill-opacity="0.08"/><rect x="917" y="186" width="1" height="1" fill="#fff" fill-opacity="0.11"/><rect x="1195" y="138" width="1" height="1" fill="#fff" fill-opacity="0.09"/><rect x="752" y="300" width="1" height="1" fill="#fff" fill-opacity="0.09"/><rect x="618" y="258" width="1" height="1" fill="#fff" fill-opacity="0.12"/><rect x="759" y="243" width="1" height="1" fill="#fff" fill-opacity="0.15"/><rect x="941" y="283" width="1" height="1" fill="#fff" fill-opacity="0.14"/><rect x="1109" y="388" width="1" height="1" fill="#fff" fill-opacity="0.11"/><rect x="822" y="363" width="1" height="1" fill="#fff" fill-opacity="0.10"/><rect x="1041" y="305" width="1" height="1" fill="#fff" fill-opacity="0.16"/><rect x="1188" y="344" width="1" height="1" fill="#fff" fill-opacity="0.08"/><rect x="985" y="242" width="1" height="1" fill="#fff" fill-opacity="0.14"/><rect x="836" y="179" width="1" height="1" fill="#fff" fill-opacity="0.16"/><rect x="933" y="165" width="1" height="1" fill="#fff" fill-opacity="0.09"/><rect x="809" y="146" width="1" height="1" fill="#fff" fill-opacity="0.13"/><rect x="692" y="111" width="1" height="1" fill="#fff" fill-opacity="0.07"/><rect x="678" y="308" width="1" height="1" fill="#fff" fill-opacity="0.08"/><rect x="884" y="328" width="1" height="1" fill="#fff" fill-opacity="0.13"/><rect x="713" y="357" width="1" height="1" fill="#fff" fill-opacity="0.18"/><rect x="649" y="170" width="1" height="1" fill="#fff" fill-opacity="0.13"/><rect x="1089" y="212" width="1" height="1" fill="#fff" fill-opacity="0.16"/><rect x="766" y="311" width="1" height="1" fill="#fff" fill-opacity="0.11"/><rect x="815" y="324" width="1" height="1" fill="#fff" fill-opacity="0.18"/><rect x="1107" y="266" width="1" height="1" fill="#fff" fill-opacity="0.12"/><rect x="1035" y="283" width="1" height="1" fill="#fff" fill-opacity="0.18"/><rect x="1091" y="130" width="1" height="1" fill="#fff" fill-opacity="0.11"/><rect x="1013" y="163" width="1" height="1" fill="#fff" fill-opacity="0.09"/><rect x="625" y="271" width="1" height="1" fill="#fff" fill-opacity="0.19"/><rect x="1191" y="133" width="1" height="1" fill="#fff" fill-opacity="0.16"/><rect x="865" y="285" width="1" height="1" fill="#fff" fill-opacity="0.12"/><rect x="1170" y="395" width="1" height="1" fill="#fff" fill-opacity="0.07"/><rect x="1039" y="128" width="1" height="1" fill="#fff" fill-opacity="0.07"/><rect x="786" y="316" width="1" height="1" fill="#fff" fill-opacity="0.20"/><rect x="688" y="193" width="1" height="1" fill="#fff" fill-opacity="0.06"/><rect x="938" y="240" width="1" height="1" fill="#fff" fill-opacity="0.11"/><rect x="800" y="337" width="1" height="1" fill="#fff" fill-opacity="0.18"/><rect x="785" y="212" width="1" height="1" fill="#fff" fill-opacity="0.15"/><rect x="1070" y="392" width="1" height="1" fill="#fff" fill-opacity="0.11"/><rect x="1028" y="259" width="1" height="1" fill="#fff" fill-opacity="0.17"/><rect x="704" y="146" width="1" height="1" fill="#fff" fill-opacity="0.07"/><rect x="1170" y="169" width="1" height="1" fill="#fff" fill-opacity="0.13"/><rect x="688" y="191" width="1" height="1" fill="#fff" fill-opacity="0.06"/><rect x="952" y="136" width="1" height="1" fill="#fff" fill-opacity="0.15"/><rect x="779" y="162" width="1" height="1" fill="#fff" fill-opacity="0.13"/><rect x="834" y="171" width="1" height="1" fill="#fff" fill-opacity="0.07"/><rect x="655" y="365" width="1" height="1" fill="#fff" fill-opacity="0.10"/><rect x="663" y="148" width="1" height="1" fill="#fff" fill-opacity="0.13"/><rect x="1207" y="154" width="1" height="1" fill="#fff" fill-opacity="0.18"/><rect x="904" y="219" width="1" height="1" fill="#fff" fill-opacity="0.17"/><rect x="851" y="110" width="1" height="1" fill="#fff" fill-opacity="0.14"/><rect x="1006" y="283" width="1" height="1" fill="#fff" fill-opacity="0.10"/><rect x="1173" y="357" width="1" height="1" fill="#fff" fill-opacity="0.20"/><rect x="879" y="347" width="1" height="1" fill="#fff" fill-opacity="0.16"/><rect x="721" y="100" width="1" height="1" fill="#fff" fill-opacity="0.08"/><rect x="687" y="115" width="1" height="1" fill="#fff" fill-opacity="0.11"/><rect x="1063" y="187" width="1" height="1" fill="#fff" fill-opacity="0.13"/><rect x="623" y="156" width="1" height="1" fill="#fff" fill-opacity="0.19"/><rect x="624" y="253" width="1" height="1" fill="#fff" fill-opacity="0.17"/><rect x="1086" y="317" width="1" height="1" fill="#fff" fill-opacity="0.12"/><rect x="1092" y="345" width="1" height="1" fill="#fff" fill-opacity="0.17"/><rect x="1201" y="123" width="1" height="1" fill="#fff" fill-opacity="0.19"/><rect x="855" y="308" width="1" height="1" fill="#fff" fill-opacity="0.10"/><rect x="1156" y="99" width="1" height="1" fill="#fff" fill-opacity="0.14"/><rect x="752" y="211" width="1" height="1" fill="#fff" fill-opacity="0.11"/><rect x="1006" y="340" width="1" height="1" fill="#fff" fill-opacity="0.11"/><rect x="995" y="200" width="1" height="1" fill="#fff" fill-opacity="0.10"/><rect x="1153" y="190" width="1" height="1" fill="#fff" fill-opacity="0.07"/><rect x="815" y="319" width="1" height="1" fill="#fff" fill-opacity="0.09"/><rect x="1057" y="259" width="1" height="1" fill="#fff" fill-opacity="0.16"/><rect x="722" y="124" width="1" height="1" fill="#fff" fill-opacity="0.08"/><rect x="824" y="224" width="1" height="1" fill="#fff" fill-opacity="0.06"/><rect x="915" y="215" width="1" height="1" fill="#fff" fill-opacity="0.11"/><rect x="935" y="383" width="1" height="1" fill="#fff" fill-opacity="0.09"/><rect x="1138" y="190" width="1" height="1" fill="#fff" fill-opacity="0.17"/><rect x="681" y="394" width="1" height="1" fill="#fff" fill-opacity="0.12"/><rect x="1187" y="159" width="1" height="1" fill="#fff" fill-opacity="0.12"/><rect x="1035" y="146" width="1" height="1" fill="#fff" fill-opacity="0.10"/><rect x="1018" y="382" width="1" height="1" fill="#fff" fill-opacity="0.11"/><rect x="726" y="201" width="1" height="1" fill="#fff" fill-opacity="0.20"/><rect x="705" y="286" width="1" height="1" fill="#fff" fill-opacity="0.11"/><rect x="998" y="157" width="1" height="1" fill="#fff" fill-opacity="0.15"/><rect x="1142" y="354" width="1" height="1" fill="#fff" fill-opacity="0.15"/><rect x="916" y="266" width="1" height="1" fill="#fff" fill-opacity="0.08"/><rect x="1113" y="303" width="1" height="1" fill="#fff" fill-opacity="0.12"/><rect x="1011" y="220" width="1" height="1" fill="#fff" fill-opacity="0.11"/><rect x="753" y="276" width="1" height="1" fill="#fff" fill-opacity="0.14"/><rect x="922" y="102" width="1" height="1" fill="#fff" fill-opacity="0.15"/><rect x="882" y="274" width="1" height="1" fill="#fff" fill-opacity="0.14"/><rect x="1169" y="138" width="1" height="1" fill="#fff" fill-opacity="0.13"/><rect x="1205" y="318" width="1" height="1" fill="#fff" fill-opacity="0.10"/><rect x="1053" y="395" width="1" height="1" fill="#fff" fill-opacity="0.12"/><rect x="1131" y="131" width="1" height="1" fill="#fff" fill-opacity="0.20"/><rect x="908" y="164" width="1" height="1" fill="#fff" fill-opacity="0.18"/><rect x="1001" y="379" width="1" height="1" fill="#fff" fill-opacity="0.18"/><rect x="1089" y="249" width="1" height="1" fill="#fff" fill-opacity="0.20"/><rect x="655" y="358" width="1" height="1" fill="#fff" fill-opacity="0.16"/><rect x="765" y="339" width="1" height="1" fill="#fff" fill-opacity="0.12"/><rect x="935" y="357" width="1" height="1" fill="#fff" fill-opacity="0.09"/><rect x="783" y="289" width="1" height="1" fill="#fff" fill-opacity="0.07"/><rect x="946" y="333" width="1" height="1" fill="#fff" fill-opacity="0.13"/><rect x="760" y="337" width="1" height="1" fill="#fff" fill-opacity="0.18"/><rect x="1073" y="260" width="1" height="1" fill="#fff" fill-opacity="0.19"/><rect x="1089" y="138" width="1" height="1" fill="#fff" fill-opacity="0.11"/><rect x="676" y="103" width="1" height="1" fill="#fff" fill-opacity="0.11"/><rect x="1129" y="347" width="1" height="1" fill="#fff" fill-opacity="0.08"/><rect x="725" y="211" width="1" height="1" fill="#fff" fill-opacity="0.18"/><rect x="982" y="368" width="1" height="1" fill="#fff" fill-opacity="0.07"/><rect x="1202" y="155" width="1" height="1" fill="#fff" fill-opacity="0.15"/><rect x="1136" y="315" width="1" height="1" fill="#fff" fill-opacity="0.09"/><rect x="1013" y="224" width="1" height="1" fill="#fff" fill-opacity="0.06"/><rect x="818" y="188" width="1" height="1" fill="#fff" fill-opacity="0.15"/><rect x="782" y="277" width="1" height="1" fill="#fff" fill-opacity="0.16"/><rect x="724" y="131" width="1" height="1" fill="#fff" fill-opacity="0.16"/><rect x="893" y="132" width="1" height="1" fill="#fff" fill-opacity="0.08"/><rect x="1174" y="279" width="1" height="1" fill="#fff" fill-opacity="0.11"/><rect x="733" y="396" width="1" height="1" fill="#fff" fill-opacity="0.16"/><rect x="1053" y="202" width="1" height="1" fill="#fff" fill-opacity="0.10"/><rect x="859" y="137" width="1" height="1" fill="#fff" fill-opacity="0.15"/><rect x="868" y="343" width="1" height="1" fill="#fff" fill-opacity="0.12"/><rect x="887" y="247" width="1" height="1" fill="#fff" fill-opacity="0.19"/><rect x="822" y="307" width="1" height="1" fill="#fff" fill-opacity="0.09"/><rect x="960" y="179" width="1" height="1" fill="#fff" fill-opacity="0.18"/><rect x="787" y="353" width="1" height="1" fill="#fff" fill-opacity="0.15"/><rect x="886" y="378" width="1" height="1" fill="#fff" fill-opacity="0.11"/><rect x="1057" y="276" width="1" height="1" fill="#fff" fill-opacity="0.12"/><rect x="655" y="220" width="1" height="1" fill="#fff" fill-opacity="0.10"/><rect x="878" y="384" width="1" height="1" fill="#fff" fill-opacity="0.10"/><rect x="1028" y="298" width="1" height="1" fill="#fff" fill-opacity="0.09"/><rect x="861" y="132" width="1" height="1" fill="#fff" fill-opacity="0.19"/><rect x="766" y="221" width="1" height="1" fill="#fff" fill-opacity="0.11"/><rect x="1103" y="352" width="1" height="1" fill="#fff" fill-opacity="0.14"/><rect x="940" y="122" width="1" height="1" fill="#fff" fill-opacity="0.19"/><rect x="669" y="203" width="1" height="1" fill="#fff" fill-opacity="0.11"/><rect x="1045" y="297" width="1" height="1" fill="#fff" fill-opacity="0.11"/><rect x="1149" y="383" width="1" height="1" fill="#fff" fill-opacity="0.06"/><rect x="992" y="236" width="1" height="1" fill="#fff" fill-opacity="0.11"/><rect x="892" y="189" width="1" height="1" fill="#fff" fill-opacity="0.15"/><rect x="975" y="389" width="1" height="1" fill="#fff" fill-opacity="0.20"/><rect x="1205" y="213" width="1" height="1" fill="#fff" fill-opacity="0.18"/><rect x="1002" y="307" width="1" height="1" fill="#fff" fill-opacity="0.20"/><rect x="656" y="233" width="1" height="1" fill="#fff" fill-opacity="0.12"/><rect x="1005" y="159" width="1" height="1" fill="#fff" fill-opacity="0.20"/><rect x="741" y="205" width="1" height="1" fill="#fff" fill-opacity="0.08"/><rect x="851" y="319" width="1" height="1" fill="#fff" fill-opacity="0.07"/><rect x="716" y="291" width="1" height="1" fill="#fff" fill-opacity="0.15"/><rect x="1056" y="170" width="1" height="1" fill="#fff" fill-opacity="0.17"/><rect x="1050" y="329" width="1" height="1" fill="#fff" fill-opacity="0.08"/><rect x="894" y="97" width="1" height="1" fill="#fff" fill-opacity="0.18"/><rect x="1176" y="366" width="1" height="1" fill="#fff" fill-opacity="0.06"/><rect x="825" y="256" width="1" height="1" fill="#fff" fill-opacity="0.13"/><rect x="683" y="334" width="1" height="1" fill="#fff" fill-opacity="0.10"/><rect x="917" y="130" width="1" height="1" fill="#fff" fill-opacity="0.14"/><rect x="694" y="119" width="1" height="1" fill="#fff" fill-opacity="0.13"/><rect x="791" y="330" width="1" height="1" fill="#fff" fill-opacity="0.09"/><rect x="862" y="109" width="1" height="1" fill="#fff" fill-opacity="0.09"/><rect x="884" y="263" width="1" height="1" fill="#fff" fill-opacity="0.12"/><rect x="1121" y="124" width="1" height="1" fill="#fff" fill-opacity="0.18"/><rect x="709" y="389" width="1" height="1" fill="#fff" fill-opacity="0.13"/><rect x="858" y="279" width="1" height="1" fill="#fff" fill-opacity="0.18"/><rect x="1188" y="218" width="1" height="1" fill="#fff" fill-opacity="0.06"/><rect x="708" y="342" width="1" height="1" fill="#fff" fill-opacity="0.16"/><rect x="1039" y="140" width="1" height="1" fill="#fff" fill-opacity="0.13"/><rect x="634" y="126" width="1" height="1" fill="#fff" fill-opacity="0.10"/><rect x="1189" y="289" width="1" height="1" fill="#fff" fill-opacity="0.18"/><rect x="644" y="219" width="1" height="1" fill="#fff" fill-opacity="0.07"/><rect x="771" y="126" width="1" height="1" fill="#fff" fill-opacity="0.19"/><rect x="812" y="242" width="1" height="1" fill="#fff" fill-opacity="0.15"/><rect x="1142" y="382" width="1" height="1" fill="#fff" fill-opacity="0.14"/><rect x="914" y="369" width="1" height="1" fill="#fff" fill-opacity="0.12"/><rect x="794" y="318" width="1" height="1" fill="#fff" fill-opacity="0.10"/><rect x="835" y="223" width="1" height="1" fill="#fff" fill-opacity="0.13"/><rect x="829" y="224" width="1" height="1" fill="#fff" fill-opacity="0.12"/><rect x="646" y="348" width="1" height="1" fill="#fff" fill-opacity="0.07"/><rect x="930" y="260" width="1" height="1" fill="#fff" fill-opacity="0.12"/><rect x="749" y="122" width="1" height="1" fill="#fff" fill-opacity="0.11"/><rect x="803" y="240" width="1" height="1" fill="#fff" fill-opacity="0.09"/><rect x="1061" y="241" width="1" height="1" fill="#fff" fill-opacity="0.06"/><rect x="858" y="388" width="1" height="1" fill="#fff" fill-opacity="0.06"/><rect x="968" y="386" width="1" height="1" fill="#fff" fill-opacity="0.11"/><rect x="971" y="205" width="1" height="1" fill="#fff" fill-opacity="0.10"/><rect x="978" y="272" width="1" height="1" fill="#fff" fill-opacity="0.10"/><rect x="912" y="250" width="1" height="1" fill="#fff" fill-opacity="0.17"/><rect x="648" y="120" width="1" height="1" fill="#fff" fill-opacity="0.10"/><rect x="777" y="335" width="1" height="1" fill="#fff" fill-opacity="0.12"/><rect x="1126" y="215" width="1" height="1" fill="#fff" fill-opacity="0.10"/><rect x="1019" y="118" width="1" height="1" fill="#fff" fill-opacity="0.20"/><rect x="1109" y="192" width="1" height="1" fill="#fff" fill-opacity="0.10"/><rect x="1102" y="333" width="1" height="1" fill="#fff" fill-opacity="0.15"/><rect x="651" y="326" width="1" height="1" fill="#fff" fill-opacity="0.07"/><rect x="987" y="261" width="1" height="1" fill="#fff" fill-opacity="0.19"/><rect x="995" y="99" width="1" height="1" fill="#fff" fill-opacity="0.19"/><rect x="1063" y="269" width="1" height="1" fill="#fff" fill-opacity="0.06"/><rect x="1053" y="220" width="1" height="1" fill="#fff" fill-opacity="0.16"/><rect x="1199" y="373" width="1" height="1" fill="#fff" fill-opacity="0.07"/><rect x="1080" y="227" width="1" height="1" fill="#fff" fill-opacity="0.17"/><rect x="841" y="229" width="1" height="1" fill="#fff" fill-opacity="0.12"/><rect x="687" y="190" width="1" height="1" fill="#fff" fill-opacity="0.16"/><rect x="659" y="127" width="1" height="1" fill="#fff" fill-opacity="0.18"/><rect x="1011" y="260" width="1" height="1" fill="#fff" fill-opacity="0.08"/><rect x="687" y="187" width="1" height="1" fill="#fff" fill-opacity="0.19"/><rect x="949" y="374" width="1" height="1" fill="#fff" fill-opacity="0.09"/><rect x="863" y="256" width="1" height="1" fill="#fff" fill-opacity="0.18"/><rect x="690" y="359" width="1" height="1" fill="#fff" fill-opacity="0.13"/><rect x="636" y="224" width="1" height="1" fill="#fff" fill-opacity="0.11"/><rect x="1016" y="376" width="1" height="1" fill="#fff" fill-opacity="0.13"/><rect x="1025" y="211" width="1" height="1" fill="#fff" fill-opacity="0.17"/><rect x="679" y="319" width="1" height="1" fill="#fff" fill-opacity="0.08"/><rect x="964" y="154" width="1" height="1" fill="#fff" fill-opacity="0.11"/><rect x="714" y="199" width="1" height="1" fill="#fff" fill-opacity="0.14"/><rect x="925" y="211" width="1" height="1" fill="#fff" fill-opacity="0.14"/><rect x="1116" y="202" width="1" height="1" fill="#fff" fill-opacity="0.14"/><rect x="901" y="392" width="1" height="1" fill="#fff" fill-opacity="0.11"/><rect x="1030" y="163" width="1" height="1" fill="#fff" fill-opacity="0.10"/><rect x="1049" y="268" width="1" height="1" fill="#fff" fill-opacity="0.10"/><rect x="655" y="344" width="1" height="1" fill="#fff" fill-opacity="0.11"/><rect x="1041" y="224" width="1" height="1" fill="#fff" fill-opacity="0.15"/><rect x="948" y="391" width="1" height="1" fill="#fff" fill-opacity="0.19"/><rect x="887" y="241" width="1" height="1" fill="#fff" fill-opacity="0.09"/><rect x="1063" y="123" width="1" height="1" fill="#fff" fill-opacity="0.10"/><rect x="1119" y="103" width="1" height="1" fill="#fff" fill-opacity="0.16"/><rect x="953" y="261" width="1" height="1" fill="#fff" fill-opacity="0.11"/><rect x="707" y="383" width="1" height="1" fill="#fff" fill-opacity="0.17"/><rect x="1094" y="122" width="1" height="1" fill="#fff" fill-opacity="0.17"/><rect x="746" y="153" width="1" height="1" fill="#fff" fill-opacity="0.13"/><rect x="978" y="129" width="1" height="1" fill="#fff" fill-opacity="0.17"/><rect x="962" y="367" width="1" height="1" fill="#fff" fill-opacity="0.19"/><rect x="1025" y="203" width="1" height="1" fill="#fff" fill-opacity="0.19"/><rect x="1042" y="181" width="1" height="1" fill="#fff" fill-opacity="0.18"/><rect x="1047" y="173" width="1" height="1" fill="#fff" fill-opacity="0.09"/><rect x="629" y="256" width="1" height="1" fill="#fff" fill-opacity="0.10"/><rect x="790" y="169" width="1" height="1" fill="#fff" fill-opacity="0.08"/><rect x="904" y="175" width="1" height="1" fill="#fff" fill-opacity="0.10"/><rect x="781" y="248" width="1" height="1" fill="#fff" fill-opacity="0.18"/><rect x="712" y="355" width="1" height="1" fill="#fff" fill-opacity="0.18"/><rect x="978" y="258" width="1" height="1" fill="#fff" fill-opacity="0.16"/><rect x="933" y="294" width="1" height="1" fill="#fff" fill-opacity="0.19"/><rect x="1076" y="172" width="1" height="1" fill="#fff" fill-opacity="0.07"/><rect x="1171" y="203" width="1" height="1" fill="#fff" fill-opacity="0.17"/><circle cx="808.7" cy="138.2" r="0.5" fill="#fff" fill-opacity="0.18"/><circle cx="1103.2" cy="120.8" r="0.6" fill="#fff" fill-opacity="0.17"/><circle cx="639.2" cy="224.7" r="0.5" fill="#fff" fill-opacity="0.08"/><circle cx="943.2" cy="110.1" r="0.6" fill="#fff" fill-opacity="0.17"/><circle cx="990.3" cy="270.4" r="0.9" fill="#fff" fill-opacity="0.08"/><circle cx="646.4" cy="159.7" r="0.6" fill="#fff" fill-opacity="0.17"/><circle cx="788.4" cy="136.1" r="0.7" fill="#fff" fill-opacity="0.09"/><circle cx="948.7" cy="300.7" r="0.6" fill="#fff" fill-opacity="0.09"/><circle cx="837.5" cy="259.6" r="0.5" fill="#fff" fill-opacity="0.08"/><circle cx="983.5" cy="243.9" r="0.7" fill="#fff" fill-opacity="0.16"/><circle cx="892.6" cy="374.6" r="0.6" fill="#fff" fill-opacity="0.13"/><circle cx="1087.3" cy="305.9" r="0.7" fill="#fff" fill-opacity="0.11"/><circle cx="927.9" cy="359.8" r="0.7" fill="#fff" fill-opacity="0.20"/><circle cx="977.5" cy="114.4" r="0.6" fill="#fff" fill-opacity="0.16"/><circle cx="1065.2" cy="138.5" r="0.5" fill="#fff" fill-opacity="0.16"/><circle cx="1186.5" cy="115.8" r="0.7" fill="#fff" fill-opacity="0.17"/><circle cx="818.4" cy="199.2" r="0.9" fill="#fff" fill-opacity="0.16"/><circle cx="657.7" cy="120.6" r="0.5" fill="#fff" fill-opacity="0.12"/><circle cx="652.9" cy="306.7" r="0.9" fill="#fff" fill-opacity="0.18"/><circle cx="785.5" cy="210.1" r="0.5" fill="#fff" fill-opacity="0.19"/><circle cx="1173.9" cy="200.8" r="0.9" fill="#fff" fill-opacity="0.18"/><circle cx="651.9" cy="327.1" r="0.6" fill="#fff" fill-opacity="0.09"/><circle cx="852.6" cy="372.5" r="0.6" fill="#fff" fill-opacity="0.16"/><circle cx="882.9" cy="260.1" r="0.9" fill="#fff" fill-opacity="0.23"/><circle cx="1128.5" cy="177.2" r="0.7" fill="#fff" fill-opacity="0.14"/><circle cx="1021.2" cy="208.4" r="0.5" fill="#fff" fill-opacity="0.11"/><circle cx="721.3" cy="163.0" r="0.9" fill="#fff" fill-opacity="0.11"/><circle cx="1109.0" cy="147.8" r="0.6" fill="#fff" fill-opacity="0.12"/><circle cx="865.0" cy="205.0" r="0.6" fill="#fff" fill-opacity="0.17"/><circle cx="1025.8" cy="249.7" r="0.5" fill="#fff" fill-opacity="0.18"/><circle cx="887.3" cy="358.5" r="0.9" fill="#fff" fill-opacity="0.24"/><circle cx="852.7" cy="212.6" r="0.9" fill="#fff" fill-opacity="0.15"/><circle cx="653.9" cy="112.6" r="0.6" fill="#fff" fill-opacity="0.10"/><circle cx="682.1" cy="275.8" r="0.6" fill="#fff" fill-opacity="0.09"/><circle cx="934.7" cy="382.4" r="0.5" fill="#fff" fill-opacity="0.18"/><circle cx="1134.6" cy="279.9" r="0.7" fill="#fff" fill-opacity="0.09"/><circle cx="1182.6" cy="276.3" r="0.5" fill="#fff" fill-opacity="0.15"/><circle cx="1119.6" cy="395.9" r="0.9" fill="#fff" fill-opacity="0.15"/><circle cx="801.6" cy="136.1" r="0.7" fill="#fff" fill-opacity="0.20"/><circle cx="900.3" cy="303.8" r="0.6" fill="#fff" fill-opacity="0.16"/><circle cx="1180.0" cy="253.6" r="0.5" fill="#fff" fill-opacity="0.09"/><circle cx="1065.8" cy="183.2" r="0.5" fill="#fff" fill-opacity="0.18"/><circle cx="1029.1" cy="171.9" r="0.6" fill="#fff" fill-opacity="0.14"/><circle cx="827.6" cy="160.2" r="0.7" fill="#fff" fill-opacity="0.17"/><circle cx="993.8" cy="279.6" r="0.6" fill="#fff" fill-opacity="0.21"/><circle cx="1094.2" cy="342.4" r="0.6" fill="#fff" fill-opacity="0.20"/><circle cx="735.4" cy="242.8" r="0.5" fill="#fff" fill-opacity="0.20"/><circle cx="1084.7" cy="236.5" r="0.7" fill="#fff" fill-opacity="0.10"/><circle cx="881.8" cy="378.7" r="0.7" fill="#fff" fill-opacity="0.25"/><circle cx="664.7" cy="123.3" r="0.7" fill="#fff" fill-opacity="0.15"/><circle cx="738.0" cy="283.0" r="0.5" fill="#fff" fill-opacity="0.23"/><circle cx="900.8" cy="291.8" r="0.5" fill="#fff" fill-opacity="0.21"/><circle cx="1111.1" cy="128.7" r="0.6" fill="#fff" fill-opacity="0.14"/><circle cx="900.0" cy="146.6" r="0.7" fill="#fff" fill-opacity="0.21"/><circle cx="668.4" cy="381.5" r="0.9" fill="#fff" fill-opacity="0.20"/><circle cx="854.6" cy="381.7" r="0.6" fill="#fff" fill-opacity="0.20"/><circle cx="1204.9" cy="100.4" r="0.9" fill="#fff" fill-opacity="0.18"/><circle cx="1094.4" cy="136.7" r="0.9" fill="#fff" fill-opacity="0.22"/><circle cx="1006.1" cy="199.2" r="0.6" fill="#fff" fill-opacity="0.17"/><circle cx="629.7" cy="336.6" r="0.5" fill="#fff" fill-opacity="0.20"/><circle cx="928.7" cy="377.7" r="0.6" fill="#fff" fill-opacity="0.14"/><circle cx="1106.1" cy="156.6" r="0.7" fill="#fff" fill-opacity="0.11"/><circle cx="913.7" cy="325.7" r="0.9" fill="#fff" fill-opacity="0.13"/><circle cx="1110.8" cy="110.6" r="0.9" fill="#fff" fill-opacity="0.20"/><circle cx="1009.2" cy="341.4" r="0.6" fill="#fff" fill-opacity="0.16"/><circle cx="931.8" cy="252.2" r="0.9" fill="#fff" fill-opacity="0.07"/><circle cx="1076.7" cy="278.2" r="0.6" fill="#fff" fill-opacity="0.21"/><circle cx="719.0" cy="236.9" r="0.5" fill="#fff" fill-opacity="0.20"/><circle cx="810.0" cy="250.6" r="0.5" fill="#fff" fill-opacity="0.17"/><circle cx="1139.9" cy="109.4" r="0.5" fill="#fff" fill-opacity="0.10"/><circle cx="1074.2" cy="247.4" r="0.5" fill="#fff" fill-opacity="0.17"/><circle cx="879.4" cy="279.4" r="0.6" fill="#fff" fill-opacity="0.16"/><circle cx="1027.1" cy="230.4" r="0.9" fill="#fff" fill-opacity="0.16"/><circle cx="917.6" cy="167.8" r="0.7" fill="#fff" fill-opacity="0.16"/><circle cx="1163.3" cy="365.2" r="0.9" fill="#fff" fill-opacity="0.10"/><circle cx="698.2" cy="129.2" r="0.5" fill="#fff" fill-opacity="0.15"/><circle cx="1014.3" cy="223.1" r="0.7" fill="#fff" fill-opacity="0.11"/><circle cx="1081.1" cy="366.5" r="0.7" fill="#fff" fill-opacity="0.09"/><circle cx="701.6" cy="362.1" r="0.6" fill="#fff" fill-opacity="0.24"/><circle cx="1059.0" cy="120.8" r="0.6" fill="#fff" fill-opacity="0.23"/><circle cx="1203.0" cy="346.7" r="0.9" fill="#fff" fill-opacity="0.09"/><circle cx="1205.5" cy="215.6" r="0.7" fill="#fff" fill-opacity="0.14"/><circle cx="805.6" cy="313.0" r="0.9" fill="#fff" fill-opacity="0.07"/><circle cx="877.8" cy="97.5" r="0.7" fill="#fff" fill-opacity="0.13"/><circle cx="920.3" cy="111.7" r="0.6" fill="#fff" fill-opacity="0.24"/><circle cx="1192.2" cy="124.1" r="0.5" fill="#fff" fill-opacity="0.12"/><circle cx="1153.3" cy="147.6" r="0.9" fill="#fff" fill-opacity="0.20"/><circle cx="1120.0" cy="298.8" r="0.9" fill="#fff" fill-opacity="0.24"/><circle cx="705.4" cy="373.3" r="0.7" fill="#fff" fill-opacity="0.17"/><circle cx="670.0" cy="109.6" r="0.9" fill="#fff" fill-opacity="0.19"/><circle cx="1147.0" cy="174.3" r="0.5" fill="#fff" fill-opacity="0.07"/><circle cx="1091.6" cy="117.6" r="0.5" fill="#fff" fill-opacity="0.22"/><circle cx="773.6" cy="129.2" r="0.9" fill="#fff" fill-opacity="0.07"/><circle cx="1165.6" cy="174.0" r="0.6" fill="#fff" fill-opacity="0.09"/><circle cx="1172.4" cy="388.6" r="0.6" fill="#fff" fill-opacity="0.11"/><circle cx="736.4" cy="187.5" r="0.6" fill="#fff" fill-opacity="0.12"/><circle cx="788.7" cy="245.0" r="0.7" fill="#fff" fill-opacity="0.10"/><circle cx="1092.8" cy="396.3" r="0.5" fill="#fff" fill-opacity="0.07"/><circle cx="1051.0" cy="260.6" r="0.9" fill="#fff" fill-opacity="0.10"/><circle cx="762.4" cy="228.8" r="0.9" fill="#fff" fill-opacity="0.18"/><circle cx="1005.7" cy="259.0" r="0.7" fill="#fff" fill-opacity="0.23"/><circle cx="1024.1" cy="392.6" r="0.6" fill="#fff" fill-opacity="0.13"/><circle cx="856.6" cy="198.4" r="0.6" fill="#fff" fill-opacity="0.08"/><circle cx="625.4" cy="283.4" r="0.9" fill="#fff" fill-opacity="0.23"/><circle cx="713.6" cy="117.9" r="0.7" fill="#fff" fill-opacity="0.22"/><circle cx="971.5" cy="304.0" r="0.6" fill="#fff" fill-opacity="0.08"/><circle cx="710.3" cy="228.4" r="0.7" fill="#fff" fill-opacity="0.12"/><circle cx="1192.8" cy="259.4" r="0.7" fill="#fff" fill-opacity="0.11"/><circle cx="746.0" cy="148.0" r="0.5" fill="#fff" fill-opacity="0.13"/><circle cx="898.0" cy="245.8" r="0.5" fill="#fff" fill-opacity="0.10"/><circle cx="670.8" cy="342.0" r="0.5" fill="#fff" fill-opacity="0.09"/><circle cx="850.2" cy="183.7" r="0.5" fill="#fff" fill-opacity="0.18"/><circle cx="963.7" cy="253.9" r="0.9" fill="#fff" fill-opacity="0.20"/><circle cx="1069.5" cy="312.5" r="0.7" fill="#fff" fill-opacity="0.16"/><circle cx="1045.7" cy="288.8" r="0.9" fill="#fff" fill-opacity="0.08"/><circle cx="1051.4" cy="340.5" r="0.5" fill="#fff" fill-opacity="0.09"/><circle cx="1106.2" cy="270.7" r="0.6" fill="#fff" fill-opacity="0.23"/><circle cx="667.4" cy="104.8" r="0.5" fill="#fff" fill-opacity="0.18"/><circle cx="840.0" cy="230.1" r="0.5" fill="#fff" fill-opacity="0.08"/><circle cx="987.7" cy="300.3" r="0.5" fill="#fff" fill-opacity="0.16"/><circle cx="887.5" cy="113.5" r="0.5" fill="#fff" fill-opacity="0.23"/><circle cx="1007.3" cy="112.2" r="0.7" fill="#fff" fill-opacity="0.20"/><circle cx="1096.1" cy="350.9" r="0.6" fill="#fff" fill-opacity="0.11"/><circle cx="753.6" cy="290.9" r="0.9" fill="#fff" fill-opacity="0.15"/><circle cx="662.4" cy="370.6" r="0.5" fill="#fff" fill-opacity="0.12"/><circle cx="982.2" cy="288.7" r="0.6" fill="#fff" fill-opacity="0.08"/><circle cx="813.4" cy="291.4" r="0.6" fill="#fff" fill-opacity="0.19"/><circle cx="624.4" cy="110.6" r="0.5" fill="#fff" fill-opacity="0.12"/><circle cx="1026.8" cy="298.8" r="0.7" fill="#fff" fill-opacity="0.12"/><circle cx="892.1" cy="234.7" r="0.6" fill="#fff" fill-opacity="0.09"/><circle cx="801.5" cy="118.3" r="0.7" fill="#fff" fill-opacity="0.15"/><circle cx="888.7" cy="342.9" r="0.9" fill="#fff" fill-opacity="0.24"/><circle cx="1205.4" cy="210.4" r="0.6" fill="#fff" fill-opacity="0.23"/><circle cx="661.2" cy="119.6" r="0.7" fill="#fff" fill-opacity="0.20"/><circle cx="1181.0" cy="132.6" r="0.7" fill="#fff" fill-opacity="0.22"/><circle cx="1142.0" cy="307.2" r="0.9" fill="#fff" fill-opacity="0.11"/><circle cx="850.3" cy="140.7" r="0.9" fill="#fff" fill-opacity="0.24"/><circle cx="857.0" cy="314.5" r="0.9" fill="#fff" fill-opacity="0.14"/><circle cx="804.1" cy="349.1" r="0.7" fill="#fff" fill-opacity="0.07"/><circle cx="1113.8" cy="128.7" r="0.5" fill="#fff" fill-opacity="0.23"/><circle cx="1150.7" cy="180.7" r="0.9" fill="#fff" fill-opacity="0.14"/><circle cx="848.0" cy="358.2" r="0.9" fill="#fff" fill-opacity="0.08"/><circle cx="1064.3" cy="353.4" r="0.5" fill="#fff" fill-opacity="0.12"/><circle cx="1111.1" cy="179.4" r="0.6" fill="#fff" fill-opacity="0.23"/><circle cx="1191.9" cy="225.5" r="0.7" fill="#fff" fill-opacity="0.13"/><circle cx="1081.8" cy="222.9" r="0.9" fill="#fff" fill-opacity="0.07"/><circle cx="1157.7" cy="379.9" r="0.5" fill="#fff" fill-opacity="0.17"/><circle cx="646.3" cy="316.1" r="0.6" fill="#fff" fill-opacity="0.15"/><circle cx="998.5" cy="179.6" r="0.6" fill="#fff" fill-opacity="0.08"/><circle cx="718.1" cy="218.9" r="0.7" fill="#fff" fill-opacity="0.12"/><circle cx="1054.5" cy="390.7" r="0.6" fill="#fff" fill-opacity="0.11"/><circle cx="795.1" cy="262.5" r="0.6" fill="#fff" fill-opacity="0.14"/><circle cx="997.8" cy="115.0" r="0.9" fill="#fff" fill-opacity="0.16"/><circle cx="942.8" cy="230.6" r="0.9" fill="#fff" fill-opacity="0.13"/><circle cx="870.0" cy="259.6" r="0.6" fill="#fff" fill-opacity="0.11"/><circle cx="819.4" cy="119.9" r="0.7" fill="#fff" fill-opacity="0.11"/><circle cx="1096.1" cy="153.9" r="0.9" fill="#fff" fill-opacity="0.07"/><circle cx="843.6" cy="320.2" r="0.7" fill="#fff" fill-opacity="0.10"/><circle cx="817.2" cy="111.0" r="0.7" fill="#fff" fill-opacity="0.12"/><circle cx="691.5" cy="246.0" r="0.6" fill="#fff" fill-opacity="0.18"/><circle cx="671.8" cy="366.4" r="0.9" fill="#fff" fill-opacity="0.14"/><circle cx="872.6" cy="187.5" r="0.5" fill="#fff" fill-opacity="0.22"/><circle cx="692.3" cy="222.1" r="0.9" fill="#fff" fill-opacity="0.21"/><circle cx="1190.2" cy="241.9" r="0.9" fill="#fff" fill-opacity="0.08"/><circle cx="1192.6" cy="168.0" r="0.6" fill="#fff" fill-opacity="0.09"/><circle cx="707.0" cy="389.4" r="0.9" fill="#fff" fill-opacity="0.09"/><circle cx="667.3" cy="329.7" r="0.6" fill="#fff" fill-opacity="0.07"/><circle cx="754.7" cy="373.5" r="0.7" fill="#fff" fill-opacity="0.18"/><circle cx="1186.8" cy="283.7" r="0.9" fill="#fff" fill-opacity="0.16"/><circle cx="1030.6" cy="126.3" r="0.6" fill="#fff" fill-opacity="0.08"/><circle cx="846.7" cy="160.4" r="0.5" fill="#fff" fill-opacity="0.18"/><circle cx="935.2" cy="396.9" r="0.7" fill="#fff" fill-opacity="0.12"/><circle cx="998.6" cy="362.4" r="0.6" fill="#fff" fill-opacity="0.15"/><circle cx="940.8" cy="101.0" r="0.7" fill="#fff" fill-opacity="0.14"/><circle cx="649.7" cy="151.4" r="0.9" fill="#fff" fill-opacity="0.23"/><circle cx="665.0" cy="161.7" r="0.7" fill="#fff" fill-opacity="0.14"/><circle cx="751.3" cy="102.4" r="0.9" fill="#fff" fill-opacity="0.13"/><circle cx="831.5" cy="213.3" r="0.7" fill="#fff" fill-opacity="0.07"/><circle cx="1054.6" cy="246.5" r="0.6" fill="#fff" fill-opacity="0.10"/><circle cx="801.5" cy="342.9" r="0.6" fill="#fff" fill-opacity="0.11"/><circle cx="773.9" cy="364.1" r="0.9" fill="#fff" fill-opacity="0.09"/><circle cx="978.2" cy="366.3" r="0.5" fill="#fff" fill-opacity="0.15"/><circle cx="1178.7" cy="136.8" r="0.6" fill="#fff" fill-opacity="0.14"/><circle cx="631.0" cy="274.4" r="0.5" fill="#fff" fill-opacity="0.14"/><circle cx="726.0" cy="229.6" r="0.7" fill="#fff" fill-opacity="0.19"/><circle cx="1050.8" cy="397.2" r="0.7" fill="#fff" fill-opacity="0.23"/><circle cx="729.9" cy="291.7" r="0.9" fill="#fff" fill-opacity="0.16"/><circle cx="635.9" cy="295.3" r="0.7" fill="#fff" fill-opacity="0.14"/><circle cx="1200.1" cy="227.4" r="0.5" fill="#fff" fill-opacity="0.09"/><circle cx="782.6" cy="199.5" r="0.5" fill="#fff" fill-opacity="0.24"/><circle cx="949.2" cy="324.2" r="0.7" fill="#fff" fill-opacity="0.14"/><circle cx="1103.6" cy="224.3" r="0.9" fill="#fff" fill-opacity="0.08"/><circle cx="732.9" cy="257.7" r="0.7" fill="#fff" fill-opacity="0.15"/><circle cx="832.6" cy="366.5" r="0.9" fill="#fff" fill-opacity="0.07"/><circle cx="763.8" cy="283.4" r="0.9" fill="#fff" fill-opacity="0.14"/><circle cx="637.6" cy="111.1" r="0.7" fill="#fff" fill-opacity="0.23"/><circle cx="732.4" cy="111.2" r="0.7" fill="#fff" fill-opacity="0.18"/><circle cx="778.2" cy="385.1" r="0.7" fill="#fff" fill-opacity="0.18"/><circle cx="1058.9" cy="303.0" r="0.7" fill="#fff" fill-opacity="0.23"/><circle cx="619.2" cy="323.2" r="0.5" fill="#fff" fill-opacity="0.23"/><circle cx="631.4" cy="163.6" r="0.9" fill="#fff" fill-opacity="0.15"/><circle cx="1181.7" cy="210.3" r="0.9" fill="#fff" fill-opacity="0.11"/><circle cx="1099.4" cy="132.6" r="0.5" fill="#fff" fill-opacity="0.16"/><circle cx="1092.1" cy="318.0" r="0.6" fill="#fff" fill-opacity="0.22"/><circle cx="976.5" cy="192.3" r="0.7" fill="#fff" fill-opacity="0.13"/><circle cx="1081.0" cy="274.3" r="0.9" fill="#fff" fill-opacity="0.16"/><circle cx="1062.7" cy="167.7" r="0.5" fill="#fff" fill-opacity="0.08"/><circle cx="902.2" cy="258.7" r="0.9" fill="#fff" fill-opacity="0.09"/><circle cx="1140.0" cy="394.3" r="0.5" fill="#fff" fill-opacity="0.12"/><circle cx="740.3" cy="220.8" r="0.9" fill="#fff" fill-opacity="0.25"/><circle cx="719.5" cy="132.7" r="0.6" fill="#fff" fill-opacity="0.15"/><circle cx="1059.8" cy="351.2" r="0.5" fill="#fff" fill-opacity="0.19"/><circle cx="1078.6" cy="181.9" r="0.7" fill="#fff" fill-opacity="0.12"/><circle cx="837.8" cy="317.8" r="0.6" fill="#fff" fill-opacity="0.10"/><circle cx="727.0" cy="164.1" r="0.6" fill="#fff" fill-opacity="0.12"/><circle cx="810.2" cy="213.2" r="0.6" fill="#fff" fill-opacity="0.25"/><circle cx="1001.6" cy="122.8" r="0.5" fill="#fff" fill-opacity="0.15"/><circle cx="677.6" cy="237.3" r="0.9" fill="#fff" fill-opacity="0.22"/><circle cx="1158.3" cy="104.4" r="0.5" fill="#fff" fill-opacity="0.12"/><circle cx="646.8" cy="275.8" r="0.6" fill="#fff" fill-opacity="0.22"/><circle cx="1167.7" cy="205.9" r="0.9" fill="#fff" fill-opacity="0.23"/><circle cx="974.0" cy="329.1" r="0.5" fill="#fff" fill-opacity="0.19"/><circle cx="679.6" cy="274.4" r="0.6" fill="#fff" fill-opacity="0.18"/><circle cx="639.2" cy="196.0" r="0.7" fill="#fff" fill-opacity="0.08"/><circle cx="639.6" cy="316.1" r="0.5" fill="#fff" fill-opacity="0.23"/><circle cx="1101.7" cy="217.2" r="0.7" fill="#fff" fill-opacity="0.14"/><circle cx="663.1" cy="101.6" r="0.9" fill="#fff" fill-opacity="0.16"/><circle cx="654.5" cy="123.0" r="0.6" fill="#fff" fill-opacity="0.14"/><circle cx="995.4" cy="119.9" r="0.7" fill="#fff" fill-opacity="0.10"/><circle cx="859.6" cy="178.7" r="0.5" fill="#fff" fill-opacity="0.12"/><circle cx="801.9" cy="265.4" r="0.9" fill="#fff" fill-opacity="0.13"/><circle cx="627.8" cy="326.6" r="0.6" fill="#fff" fill-opacity="0.21"/><circle cx="848.3" cy="215.9" r="0.9" fill="#fff" fill-opacity="0.24"/><circle cx="1150.8" cy="221.7" r="0.9" fill="#fff" fill-opacity="0.22"/><circle cx="959.1" cy="203.6" r="0.6" fill="#fff" fill-opacity="0.21"/><circle cx="625.8" cy="260.8" r="0.9" fill="#fff" fill-opacity="0.18"/><circle cx="669.7" cy="282.4" r="0.6" fill="#fff" fill-opacity="0.14"/><circle cx="703.4" cy="178.7" r="0.5" fill="#fff" fill-opacity="0.16"/><circle cx="681.4" cy="242.1" r="0.6" fill="#fff" fill-opacity="0.21"/><circle cx="795.6" cy="348.2" r="0.9" fill="#fff" fill-opacity="0.08"/><circle cx="803.2" cy="277.9" r="0.5" fill="#fff" fill-opacity="0.18"/><circle cx="1152.3" cy="281.8" r="0.6" fill="#fff" fill-opacity="0.22"/><circle cx="996.1" cy="354.1" r="0.6" fill="#fff" fill-opacity="0.18"/><circle cx="1107.9" cy="148.0" r="0.9" fill="#fff" fill-opacity="0.11"/><circle cx="1172.6" cy="139.9" r="0.6" fill="#fff" fill-opacity="0.13"/><circle cx="763.3" cy="313.8" r="0.5" fill="#fff" fill-opacity="0.23"/><circle cx="1140.2" cy="349.8" r="0.7" fill="#fff" fill-opacity="0.19"/><circle cx="686.7" cy="275.5" r="0.7" fill="#fff" fill-opacity="0.17"/><circle cx="1001.2" cy="186.3" r="0.9" fill="#fff" fill-opacity="0.11"/><circle cx="1007.0" cy="228.7" r="0.5" fill="#fff" fill-opacity="0.15"/><circle cx="619.1" cy="393.8" r="0.9" fill="#fff" fill-opacity="0.15"/><circle cx="1069.0" cy="330.7" r="0.6" fill="#fff" fill-opacity="0.15"/><circle cx="1096.8" cy="214.5" r="0.7" fill="#fff" fill-opacity="0.08"/><circle cx="871.9" cy="120.1" r="0.5" fill="#fff" fill-opacity="0.15"/><circle cx="641.1" cy="131.9" r="0.7" fill="#fff" fill-opacity="0.23"/><circle cx="1077.4" cy="248.5" r="0.9" fill="#fff" fill-opacity="0.08"/><circle cx="1003.4" cy="332.0" r="0.5" fill="#fff" fill-opacity="0.07"/><circle cx="1206.7" cy="316.0" r="0.6" fill="#fff" fill-opacity="0.22"/><circle cx="694.9" cy="363.0" r="0.6" fill="#fff" fill-opacity="0.12"/><circle cx="1023.2" cy="312.7" r="0.7" fill="#fff" fill-opacity="0.11"/></g>
<circle cx="913.3" cy="244" r="93.3" fill="#e6f0f8"/>
<circle cx="913.3" cy="244" r="91.8" fill="url(#oc)"/>
<g clip-path="url(#gc)" filter="url(#bl)">
 <path d="M810,165 L860,165 L900,161 L950,165 L958,175 L952,190 L945,200 L935,208 L926,215 L918,228 L916,232 L912,248 L905,256 L895,262 L892,268 L888,268 L884,258 L876,250 L870,245 L866,252 L860,258 L852,262 L846,266 L844,255 L840,236 L828,238 L810,240 Z" fill="#ccd3b6"/>
 <path d="M810,150 L1000,150 L1000,163 L950,163 L900,159 L860,163 L820,170 L810,178 Z" fill="#94b9d9"/>
 <path d="M832,192 L860,174 L900,168 L945,170 L948,184 L925,196 L890,202 L860,202 L838,210 Z" fill="#d6dbcc"/>
 <ellipse cx="870" cy="220" rx="18" ry="13" fill="#d9dcd8"/>
 <ellipse cx="834" cy="222" rx="9" ry="12" fill="#d8dacf"/>
 <path d="M836,236 L874,240 L866,252 L856,262 L849,270 L844,258 Z" fill="#c6cf9e"/>
 <path d="M872,238 L906,248 L898,262 L894,274 L887,272 L880,256 L874,250 Z" fill="#c4cf9c"/>
 <path d="M946,172 L956,174 L958,192 L950,208 L942,216 L938,210 L948,192 Z" fill="#d6ddd6"/>
 <path d="M902,312 L914,306 L930,307 L944,302 L954,304 L958,316 L952,325 L935,328 L912,329 L902,324 Z" fill="#ddd8bc"/>
 <ellipse cx="879" cy="281" rx="14" ry="2.6" fill="#bccba4" transform="rotate(58 879 281)"/>
 <ellipse cx="901" cy="285" rx="9" ry="5.5" fill="#bfcca4"/>
 <ellipse cx="950" cy="292" rx="11" ry="4" fill="#c2cfa6"/>
 <ellipse cx="918" cy="266" rx="3.5" ry="12" fill="#a6bfb6"/>
</g>
<path d="M843.9,91 Q956.3,226 1042.7,361" fill="none" stroke="#f2cc4a" stroke-width="2.2"/>
<!-- shadow ribbon -->
<polygon points="985,186.5 1050,187.5 1059,189.5 1058,195.5 1046,196 985,193" fill="#53423f"/>
<!-- pink curve -->
<path d="M922,215 Q948,200 972.9,188.3 Q990,181 1010,177.5 Q1030,175 1033,184 Q1033.5,189 1031.5,192" fill="none" stroke="#e580d8" stroke-width="2.5" stroke-linecap="round"/>
<circle cx="972.9" cy="188.3" r="9" fill="#e04898" filter="url(#gl)"/><circle cx="972.9" cy="188.3" r="7.8" fill="#d83a8a"/>
<circle cx="972.9" cy="188.3" r="6" fill="#a1134f"/>
<circle cx="972.9" cy="188.3" r="2.8" fill="none" stroke="#f6c6dc" stroke-width="1.2"/>
<!-- satellite -->
<path d="M914,194.5 L933.5,182" stroke="#0a0a0a" stroke-width="4.8" stroke-linecap="round"/><path d="M915,194 L933,182.6" stroke="#9a9a9a" stroke-width="0.7" stroke-dasharray="1 2"/>
<!-- green line -->
<path d="M866,175 L904,213" stroke="#f0f0ea" stroke-opacity="0.8" stroke-width="1.2"/>
<path d="M863,172 L869,174 L866,178 Z" fill="#4cd04c"/>
<path d="M906,215 L915.5,229" stroke="#52c852" stroke-width="3.8" stroke-linecap="round"/><path d="M907,216.5 L914.5,227.5" stroke="#2f9a2f" stroke-width="1" stroke-dasharray="1 2"/>
<!-- cesium ion logo -->
<circle cx="742" cy="346" r="11.6" fill="#f4f4f4"/>
<circle cx="742" cy="346" r="10" fill="#79a6d6"/>
<path d="M731,352 L736,345 L741,350 L747,342 L753,347 L753,358 L731,358 Z" fill="#6aa44e" clip-path="url(#lc)"/>
<clipPath id="lc"><circle cx="742" cy="346" r="10"/></clipPath>
<path d="M732,352 L736.5,345.5 L741,350.5 L747,342.5 L752,347" fill="none" stroke="#f4f4f4" stroke-width="1.6"/>
<circle cx="748.5" cy="340" r="1" fill="#fff"/>
<text x="754.6" y="352.3" font-family="Liberation Sans" font-weight="bold" font-size="14" fill="#f2f2f2" textLength="81.4" lengthAdjust="spacingAndGlyphs">CESIUM</text>
<text x="840" y="353" font-family="Liberation Sans" font-size="16" fill="#6a9ad2" textLength="25" lengthAdjust="spacingAndGlyphs" stroke="#6a9ad2" stroke-width="0.4">ion</text>
<text x="871.4" y="359.8" font-family="Liberation Sans" font-size="10.2" fill="#f0f0f0" textLength="67" lengthAdjust="spacingAndGlyphs">Data attribution</text>
<rect x="871.4" y="360.6" width="67.3" height="1" fill="#e8e8e8"/>
</svg>
</div>

<!-- cesium toolbar -->
<div class="a" style="left:1017px;top:99px;width:32px;height:32px;background:#303336;border:1px solid #444;border-radius:4px"></div>
<div class="a" style="left:1055px;top:99px;width:32px;height:32px;background:#303336;border:1px solid #444;border-radius:4px"></div>
<div class="a" style="left:1093px;top:99px;width:32px;height:32px;background:#303336;border:1px solid #444;border-radius:4px"></div>
<div class="a" style="left:1131px;top:99px;width:32px;height:32px;background:#303336;border:1px solid #444;border-radius:4px"></div>
<div class="a" style="left:1169px;top:99px;width:32px;height:32px;background:#303336;border:1px solid #444;border-radius:4px"></div>
<svg class="a" style="left:1017px;top:99px" width="184" height="32" viewBox="0 0 184 32">
 <g fill="#edf2f4">
  <rect x="9.5" y="9" width="14.5" height="2.8" rx="1.2"/><rect x="9.5" y="14.3" width="14.5" height="2.8" rx="1.2"/><rect x="9.5" y="19.6" width="14.5" height="2.8" rx="1.2"/>
 </g>
 <g transform="translate(38,0)" fill="#edf2f4">
  <path d="M6,14.8 L16,5.2 L26,14.8 Z"/>
  <rect x="18.4" y="5.8" width="3.2" height="6"/>
  <path d="M8.6,14 L23.4,14 L23.4,26.8 L8.6,26.8 Z"/>
  <rect x="15" y="18.4" width="4.2" height="8.4" fill="#303336"/>
  <rect x="10.9" y="18.4" width="2.8" height="3.1" fill="#303336"/>
 </g>
 <g transform="translate(76,0)" fill="none" stroke="#edf2f4" stroke-width="1.5">
  <circle cx="16" cy="15.5" r="12.3"/>
  <ellipse cx="16" cy="15.5" rx="5.5" ry="12.3"/>
  <line x1="16" y1="3.2" x2="16" y2="27.8"/>
  <line x1="3.7" y1="15.5" x2="28.3" y2="15.5"/>
  <path d="M5.2,9.5 L26.8,9.5 M5.2,21.5 L26.8,21.5"/>
 </g>
 <g transform="translate(114,0)">
  <circle cx="16" cy="15.5" r="13.2" fill="#edf6f8"/>
  <text x="16" y="22.5" text-anchor="middle" font-family="Liberation Sans" font-weight="bold" font-size="19" fill="#202326">?</text>
 </g>
 <g transform="translate(168,15.5)" fill="#edf2f4">
  <path d="M0,-8.5 L4,-4.5 L1.8,-4.5 L1.8,-1.8 L4.5,-1.8 L4.5,-4 L8.5,0 L4.5,4 L4.5,1.8 L1.8,1.8 L1.8,4.5 L4,4.5 L0,8.5 L-4,4.5 L-1.8,4.5 L-1.8,1.8 L-4.5,1.8 L-4.5,4 L-8.5,0 L-4.5,-4 L-4.5,-1.8 L-1.8,-1.8 L-1.8,-4.5 L-4,-4.5 Z"/>
 </g>
</svg>

<!-- animation widget -->
<svg class="a" style="left:617px;top:320px" width="110" height="78" viewBox="617 320 110 78">
 <defs>
  <filter id="gl2" x="-50%" y="-50%" width="200%" height="200%"><feGaussianBlur stdDeviation="1.2"/></filter><radialGradient id="knob" cx="0.5" cy="0.3" r="0.7"><stop offset="0" stop-color="#6a6d72"/><stop offset="1" stop-color="#3a3c40"/></radialGradient>
  <linearGradient id="ring" x1="0" y1="0" x2="0" y2="1"><stop offset="0" stop-color="#2a2c30"/><stop offset="0.6" stop-color="#5a6a7c"/><stop offset="1" stop-color="#8ea2b6"/></linearGradient>
 </defs>
 <circle cx="670" cy="379" r="51.5" fill="#1a1b1e" stroke="#2c2d31" stroke-width="1"/>
 <circle cx="670" cy="379" r="47" fill="none" stroke="url(#ring)" stroke-width="3.5"/>
 <circle cx="670" cy="379" r="43" fill="#141517"/>
 <circle cx="670" cy="379" r="37" fill="url(#knob)"/>
 <circle cx="670" cy="379" r="33" fill="#4b4d52"/>
 <rect x="669.3" y="330" width="1.4" height="8.5" fill="#8a8d92"/>
 <path d="M674.4,342 L683.3,331.2 L685.6,343.6 Z" fill="#c8c8c8"/>
 <path d="M683.3,331.2 L685.6,343.6 L680,343 Z" fill="#8a8a8a"/>
 <rect x="639" y="380" width="62" height="15" fill="#3c3e44"/>
 <path d="M644,387.5 L652,382.5 L652,392.5 Z" fill="#e8e8e8"/>
 <path d="M696,387.5 L688,382.5 L688,392.5 Z" fill="#e8e8e8"/>
 <rect x="660.5" y="379.5" width="20" height="16.5" fill="none" stroke="#3fcf50" stroke-opacity="0.45" stroke-width="2.5" filter="url(#gl2)"/><rect x="661.5" y="380.5" width="18" height="14.5" fill="#22422a" stroke="#42c852" stroke-width="1.3"/>
 <rect x="666.5" y="383.5" width="2.6" height="9" fill="#e8e8e8"/><rect x="671.9" y="383.5" width="2.6" height="9" fill="#e8e8e8"/>
 <text x="670.4" y="358.2" text-anchor="middle" font-family="Liberation Sans" font-size="8.3" font-weight="bold" fill="#dcdcdc">1x</text>
 <text x="670.2" y="367" text-anchor="middle" font-family="Liberation Sans" font-size="8.3" fill="#e4e4e4" stroke="#e4e4e4" stroke-width="0.25">Jan 1 2030</text>
 <text x="670.3" y="375.6" text-anchor="middle" font-family="Liberation Sans" font-size="8.3" fill="#e4e4e4" stroke="#e4e4e4" stroke-width="0.25">19:40:21 UTC</text>
 <rect x="618.5" y="329" width="18" height="17.5" rx="2" fill="#2b2c30"/>
 <circle cx="626.8" cy="338" r="5.2" fill="none" stroke="#e8e8e8" stroke-width="1.3"/>
 <path d="M626.8,334.8 L626.8,338 L624.8,340" fill="none" stroke="#e8e8e8" stroke-width="1"/>
</svg>

<!-- timeline -->
<svg class="a" style="left:723px;top:369px" width="487" height="30" viewBox="723 369 487 30">
 <defs><linearGradient id="tlg" x1="0" y1="0" x2="0" y2="1"><stop offset="0" stop-color="#44474c"/><stop offset="0.5" stop-color="#2b2d31"/><stop offset="1" stop-color="#1c1d20"/></linearGradient></defs>
 <rect x="723.5" y="370" width="485" height="27" fill="url(#tlg)"/>
 <rect x="723.5" y="370" width="485" height="1" fill="#8a8c90"/>
 <rect x="723.5" y="370" width="1" height="27" fill="#6a6c70"/>
 <rect x="1207.5" y="370" width="1" height="27" fill="#6a6c70"/>
 <rect x="723.5" y="395" width="485" height="1" fill="#c8c8c8"/>
 <rect x="727.11" y="389.5" width="1" height="6" fill="#d8d8d8"/><rect x="735.35" y="389.5" width="1" height="6" fill="#d8d8d8"/><rect x="743.60" y="386.5" width="1" height="9" fill="#d8d8d8"/><rect x="751.85" y="389.5" width="1" height="6" fill="#d8d8d8"/><rect x="760.09" y="389.5" width="1" height="6" fill="#d8d8d8"/><rect x="768.34" y="389.5" width="1" height="6" fill="#d8d8d8"/><rect x="776.59" y="389.5" width="1" height="6" fill="#d8d8d8"/><rect x="784.83" y="389.5" width="1" height="6" fill="#d8d8d8"/><rect x="793.08" y="389.5" width="1" height="6" fill="#d8d8d8"/><rect x="801.33" y="389.5" width="1" height="6" fill="#d8d8d8"/><rect x="809.57" y="389.5" width="1" height="6" fill="#d8d8d8"/><rect x="817.82" y="389.5" width="1" height="6" fill="#d8d8d8"/><rect x="826.07" y="389.5" width="1" height="6" fill="#d8d8d8"/><rect x="834.31" y="389.5" width="1" height="6" fill="#d8d8d8"/><rect x="842.56" y="389.5" width="1" height="6" fill="#d8d8d8"/><rect x="850.81" y="389.5" width="1" height="6" fill="#d8d8d8"/><rect x="859.05" y="389.5" width="1" height="6" fill="#d8d8d8"/><rect x="867.30" y="383.5" width="1" height="12" fill="#d8d8d8"/><rect x="875.55" y="389.5" width="1" height="6" fill="#d8d8d8"/><rect x="883.79" y="389.5" width="1" height="6" fill="#d8d8d8"/><rect x="892.04" y="389.5" width="1" height="6" fill="#d8d8d8"/><rect x="900.29" y="389.5" width="1" height="6" fill="#d8d8d8"/><rect x="908.53" y="389.5" width="1" height="6" fill="#d8d8d8"/><rect x="916.78" y="389.5" width="1" height="6" fill="#d8d8d8"/><rect x="925.03" y="389.5" width="1" height="6" fill="#d8d8d8"/><rect x="933.27" y="389.5" width="1" height="6" fill="#d8d8d8"/><rect x="941.52" y="389.5" width="1" height="6" fill="#d8d8d8"/><rect x="949.77" y="389.5" width="1" height="6" fill="#d8d8d8"/><rect x="958.01" y="389.5" width="1" height="6" fill="#d8d8d8"/><rect x="966.26" y="389.5" width="1" height="6" fill="#d8d8d8"/><rect x="974.51" y="389.5" width="1" height="6" fill="#d8d8d8"/><rect x="982.75" y="389.5" width="1" height="6" fill="#d8d8d8"/><rect x="991.00" y="386.5" width="1" height="9" fill="#d8d8d8"/><rect x="999.25" y="389.5" width="1" height="6" fill="#d8d8d8"/><rect x="1007.49" y="389.5" width="1" height="6" fill="#d8d8d8"/><rect x="1015.74" y="389.5" width="1" height="6" fill="#d8d8d8"/><rect x="1023.99" y="389.5" width="1" height="6" fill="#d8d8d8"/><rect x="1032.23" y="389.5" width="1" height="6" fill="#d8d8d8"/><rect x="1040.48" y="389.5" width="1" height="6" fill="#d8d8d8"/><rect x="1048.73" y="389.5" width="1" height="6" fill="#d8d8d8"/><rect x="1056.97" y="389.5" width="1" height="6" fill="#d8d8d8"/><rect x="1065.22" y="389.5" width="1" height="6" fill="#d8d8d8"/><rect x="1073.47" y="389.5" width="1" height="6" fill="#d8d8d8"/><rect x="1081.71" y="389.5" width="1" height="6" fill="#d8d8d8"/><rect x="1089.96" y="389.5" width="1" height="6" fill="#d8d8d8"/><rect x="1098.21" y="389.5" width="1" height="6" fill="#d8d8d8"/><rect x="1106.45" y="389.5" width="1" height="6" fill="#d8d8d8"/><rect x="1114.70" y="383.5" width="1" height="12" fill="#d8d8d8"/><rect x="1122.95" y="389.5" width="1" height="6" fill="#d8d8d8"/><rect x="1131.19" y="389.5" width="1" height="6" fill="#d8d8d8"/><rect x="1139.44" y="389.5" width="1" height="6" fill="#d8d8d8"/><rect x="1147.69" y="389.5" width="1" height="6" fill="#d8d8d8"/><rect x="1155.93" y="389.5" width="1" height="6" fill="#d8d8d8"/><rect x="1164.18" y="389.5" width="1" height="6" fill="#d8d8d8"/><rect x="1172.43" y="389.5" width="1" height="6" fill="#d8d8d8"/><rect x="1180.67" y="389.5" width="1" height="6" fill="#d8d8d8"/><rect x="1188.92" y="389.5" width="1" height="6" fill="#d8d8d8"/><rect x="1197.17" y="389.5" width="1" height="6" fill="#d8d8d8"/><rect x="1205.41" y="389.5" width="1" height="6" fill="#d8d8d8"/>
 <text x="806.5" y="385.3" font-family="Liberation Sans" font-weight="bold" font-size="11" fill="#dedede">Jan 1 2030 19:00:00.000</text>
 <text x="1054" y="385.3" font-family="Liberation Sans" font-weight="bold" font-size="11" fill="#dedede">Jan 1 2030 19:30:00.000</text>
 <path d="M1193,385 Q1193,378 1199.5,378 Q1206,378 1206,385 L1201,391 L1201,396 L1198,396 L1198,391 Z" fill="#5ba0e6" stroke="#2e6cb0" stroke-width="0.6"/>
 <path d="M1197,381 L1197,387 M1199.5,381 L1199.5,387 M1202,381 L1202,387" stroke="#dcecff" stroke-width="0.8"/>
</svg>

<!-- PANEL 3 : timeline -->
<div class="panel" style="left:16px;top:405px;width:1194px;height:283px"></div>
<svg class="a" style="left:1183px;top:419px" width="14" height="14" viewBox="-7 -7 14 14"><path fill="#e8e8e8" d="M0,-6.3 L3,-3.2 L1.3,-3.2 L1.3,-1.3 L3.2,-1.3 L3.2,-3 L6.3,0 L3.2,3 L3.2,1.3 L1.3,1.3 L1.3,3.2 L3,3.2 L0,6.3 L-3,3.2 L-1.3,3.2 L-1.3,1.3 L-3.2,1.3 L-3.2,3 L-6.3,0 L-3.2,-3 L-3.2,-1.3 L-1.3,-1.3 L-1.3,-3.2 L-3,-3.2 Z"/></svg>
<div class="a" style="left:16px;top:440px;width:1193px;height:247px;border:1px solid #bfbfbf;background:#1c1d1f"></div>
<div class="vline" style="left:64px;top:440px;width:1px;height:247px"></div>
<div class="vline" style="left:16px;top:493px;width:1193px;height:2px"></div>
<div class="vline" style="left:16px;top:525px;width:1193px;height:1px"></div>
<div class="vline" style="left:16px;top:556px;width:1193px;height:2px"></div>
<div class="vline" style="left:136px;top:467px;width:1px;height:220px"></div><div class="tl" style="left:140px;top:472px">19:34</div>
<div class="vline" style="left:276px;top:467px;width:1px;height:220px"></div><div class="tl" style="left:281px;top:472px">19:35</div>
<div class="vline" style="left:417px;top:467px;width:1px;height:220px"></div><div class="tl" style="left:421px;top:472px">19:36</div>
<div class="vline" style="left:557px;top:467px;width:1px;height:220px"></div><div class="tl" style="left:561px;top:472px">19:37</div>
<div class="vline" style="left:697px;top:467px;width:1px;height:220px"></div><div class="tl" style="left:702px;top:472px">19:38</div>
<div class="vline" style="left:838px;top:467px;width:1px;height:220px"></div><div class="tl" style="left:842px;top:472px">19:39</div>
<div class="vline" style="left:978px;top:467px;width:1px;height:220px"></div><div class="tl" style="left:982px;top:472px">19:40</div>
<div class="vline" style="left:1118px;top:467px;width:1px;height:220px"></div><div class="tl" style="left:1123px;top:472px">19:41</div>

<div class="a" style="left:23px;top:449px;font-size:13.5px;line-height:16px;font-weight:bold;color:#eeeeee;white-space:nowrap;letter-spacing:0.2px">Group By</div>
<div class="a" style="left:69px;top:445px;font-size:14px;line-height:16px;color:#e0e0e0;white-space:nowrap">Tue 1 January</div>
<div class="a" style="left:22px;top:469px;font-size:14px;line-height:16px;color:#8c8c8c">Order</div>
<div class="a" style="left:70px;top:471px;width:0;height:0;border-left:4.5px solid transparent;border-right:4.5px solid transparent;border-top:5px solid #f0f0f0"></div>
<div class="a" style="left:21px;top:502.5px;font-size:14px;line-height:16px;color:#e8e8e8">CA01</div>
<div class="a" style="left:22px;top:533px;font-size:14px;line-height:16px;color:#e8e8e8">HI001</div>
<div class="item" style="left:65px;top:499px;width:18px;border-radius:0 3px 3px 0"></div>
<div class="item" style="left:239px;top:499px;width:70px"></div>
<div class="item" style="left:462px;top:499px;width:70px"></div>
<div class="item" style="left:683.5px;top:499px;width:70px"></div>
<div class="item" style="left:903px;top:499px;width:70px"></div>
<div class="item" style="left:1019px;top:530px;width:140px;background:#e47cf0"></div>

</body></html>
